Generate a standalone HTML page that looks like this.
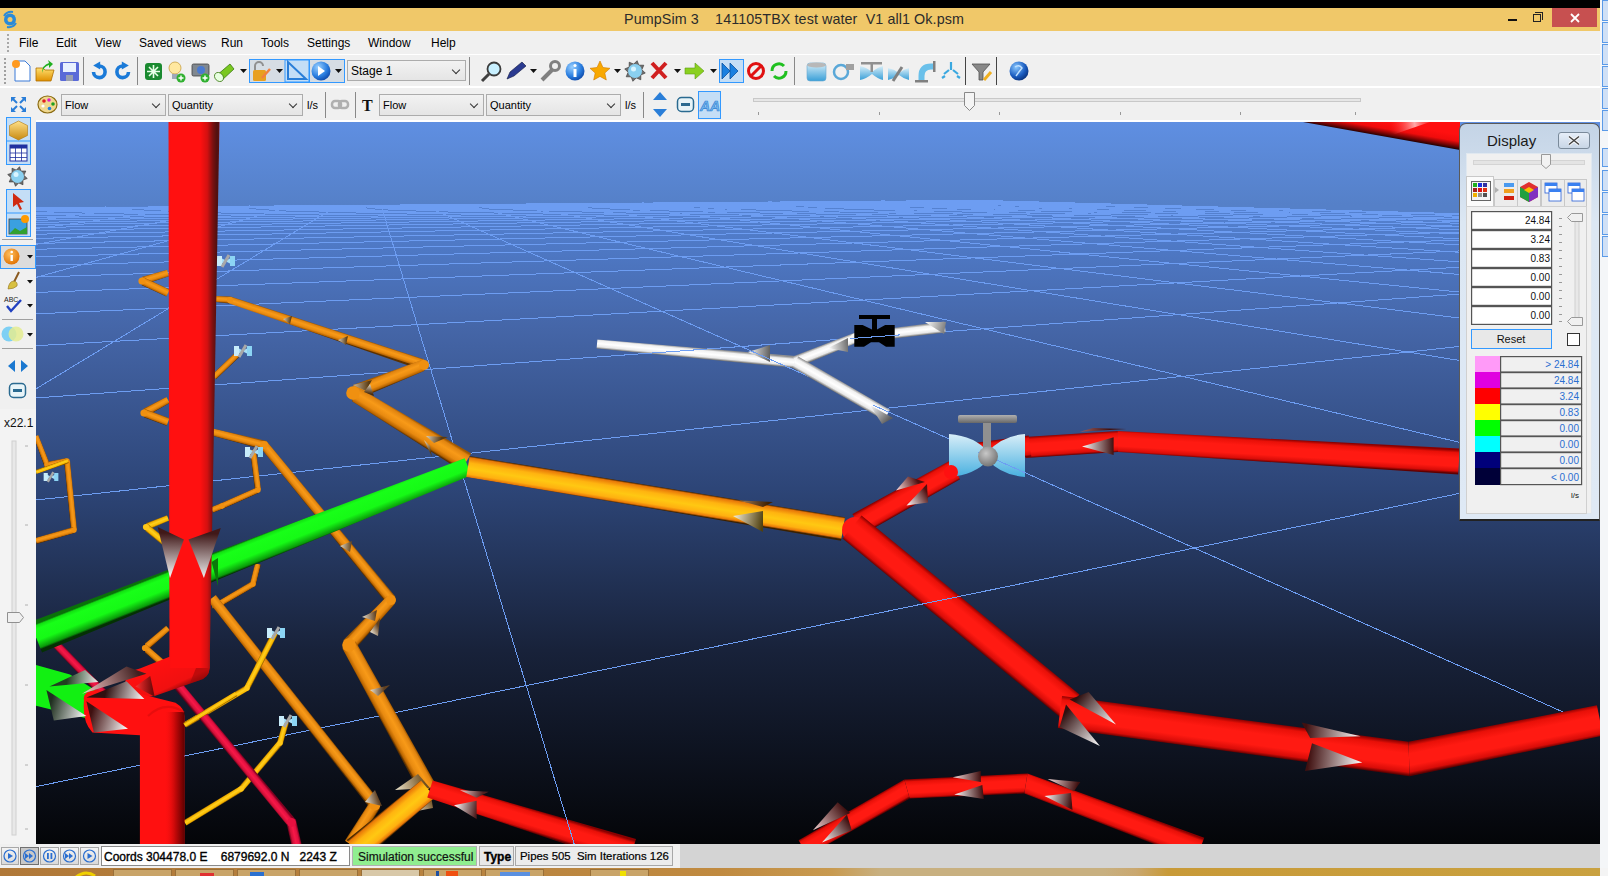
<!DOCTYPE html>
<html><head><meta charset="utf-8">
<style>
*{box-sizing:border-box}
html,body{margin:0;padding:0}
body{width:1608px;height:876px;overflow:hidden;position:relative;background:#f0f0f0;font-family:"Liberation Sans",sans-serif;}
.abs{position:absolute}
#topblack{left:0;top:0;width:1600px;height:8px;background:#000}
#title{left:0;top:8px;width:1600px;height:23px;background:#f0c869}
#title .t{position:absolute;left:624px;top:3px;font-size:14.3px;color:#2b2b2b;white-space:pre;letter-spacing:0.1px}
#menubar{left:0;top:31px;width:1600px;height:23px;background:#f0f0f0}
#menubar span{position:absolute;top:5px;font-size:12px;color:#000}
#tb1{left:0;top:55px;width:1600px;height:31px;background:#f0f0f0}
#tb2{left:0;top:88px;width:1600px;height:33px;background:#f0f0f0}
.wl{background:#fff}
.combo{position:absolute;height:22px;border:1px solid #acacac;background:linear-gradient(#f2f2f2,#e5e5e5);font-size:12px;padding:4px 0 0 3px;color:#000}
.combo:after{content:"";position:absolute;right:6px;top:6px;width:5px;height:5px;border-right:1.5px solid #333;border-bottom:1.5px solid #333;transform:rotate(45deg)}
.sep{position:absolute;width:1px;background:#a0a0a0}
#left{left:0;top:121px;width:36px;height:723px;background:#f0f0f0}
#view{left:0;top:0}
#status{left:0;top:844px;width:1600px;height:24px;background:#d4d4d4}
#task{left:0;top:868px;width:1600px;height:8px;background:linear-gradient(90deg,#b07838 0%,#b98440 30%,#c08a40 45%,#c89a50 52%,#c8b080 55%,#c8b080 69%,#caa870 71%,#c89a38 73%,#c9a140 100%)}
#rstrip{left:1600px;top:8px;width:8px;height:858px;background:#e8eef6}
.sb{position:absolute;top:848px;height:18px;font-size:12px;color:#000;padding:2px 4px 0 4px;white-space:pre;-webkit-text-stroke:0.35px #000}
</style></head><body>
<div class="abs" id="topblack"></div>
<div class="abs" id="title"><span class="t">PumpSim 3    141105TBX test water  V1 all1 Ok.psm</span>
 <div class="abs" style="left:1508px;top:11px;width:9px;height:2px;background:#111"></div>
 <div class="abs" style="left:1533px;top:6px;width:8px;height:8px;border:1.5px solid #222"></div>
 <div class="abs" style="left:1535px;top:4px;width:8px;height:8px;border-top:1.5px solid #222;border-right:1.5px solid #222"></div>
 <div class="abs" style="left:1552px;top:0px;width:45px;height:19px;background:#c75050"></div>
 <svg class="abs" style="left:1570px;top:5px" width="10" height="10"><path d="M1,1L9,9M9,1L1,9" stroke="#fff" stroke-width="1.8"/></svg>
</div>
<div class="abs" id="rstrip"></div>
<div class="abs" id="menubar">
 <div class="abs" style="left:7px;top:3px;width:2px;height:18px;border-left:2px dotted #a8a8a8"></div>
 <span style="left:19px">File</span><span style="left:56px">Edit</span><span style="left:95px">View</span><span style="left:139px">Saved views</span><span style="left:221px">Run</span><span style="left:261px">Tools</span><span style="left:307px">Settings</span><span style="left:368px">Window</span><span style="left:431px">Help</span>
</div>
<div class="abs wl" style="left:0;top:54px;width:1600px;height:1px"></div>
<div class="abs" id="tb1"></div>
<div class="abs wl" style="left:0;top:86px;width:1600px;height:2px"></div>
<div class="abs" id="tb2"></div>
<div class="abs" id="left"></div>
<div class="abs" style="left:36px;top:120px;width:1564px;height:2px;background:#fff"></div>
<svg class="abs" id="view" width="1608" height="876" style="left:0;top:0">
<clipPath id="vclip"><rect x="36" y="122" width="1564" height="722"/></clipPath>
<g clip-path="url(#vclip)">
<defs><linearGradient id="sky" gradientUnits="userSpaceOnUse" x1="0" y1="122" x2="0" y2="205"><stop offset="0" stop-color="#5f8fe2"/><stop offset="1" stop-color="#5580c8"/></linearGradient>
<linearGradient id="gnd" gradientUnits="userSpaceOnUse" x1="0" y1="198" x2="0" y2="844"><stop offset="0" stop-color="#5684d4"/><stop offset="0.08" stop-color="#4e78c4"/><stop offset="0.2" stop-color="#4566a8"/><stop offset="0.45" stop-color="#2d4577"/><stop offset="0.7" stop-color="#18223a"/><stop offset="1" stop-color="#040508"/></linearGradient>
<linearGradient id="rw" gradientUnits="userSpaceOnUse" x1="1402.5" y1="125" x2="1400" y2="139.4"><stop offset="0" stop-color="#ff1010"/><stop offset="0.45" stop-color="#f00c0c"/><stop offset="0.8" stop-color="#700404"/><stop offset="1" stop-color="#200000"/></linearGradient>
<linearGradient id="rwh" gradientUnits="userSpaceOnUse" x1="1390" y1="130" x2="1440" y2="122"><stop offset="0" stop-color="#ff3030" stop-opacity="0"/><stop offset="0.5" stop-color="#ffd0d0" stop-opacity="0.8"/><stop offset="1" stop-color="#ff3030" stop-opacity="0"/></linearGradient>
<linearGradient id="g1" gradientUnits="userSpaceOnUse" x1="696.5" y1="347.8" x2="695.5" y2="358.2"><stop offset="0" stop-color="#909090"/><stop offset="0.2" stop-color="#f0f0f0"/><stop offset="0.5" stop-color="#ffffff"/><stop offset="0.8" stop-color="#e8e8e8"/><stop offset="1" stop-color="#707070"/></linearGradient>
<linearGradient id="g2" gradientUnits="userSpaceOnUse" x1="823.0" y1="344.9" x2="827.0" y2="355.1"><stop offset="0" stop-color="#909090"/><stop offset="0.2" stop-color="#f0f0f0"/><stop offset="0.5" stop-color="#ffffff"/><stop offset="0.8" stop-color="#e8e8e8"/><stop offset="1" stop-color="#707070"/></linearGradient>
<linearGradient id="g3" gradientUnits="userSpaceOnUse" x1="899.4" y1="327.3" x2="900.6" y2="337.7"><stop offset="0" stop-color="#909090"/><stop offset="0.2" stop-color="#f0f0f0"/><stop offset="0.5" stop-color="#ffffff"/><stop offset="0.8" stop-color="#e8e8e8"/><stop offset="1" stop-color="#707070"/></linearGradient>
<linearGradient id="g4" gradientUnits="userSpaceOnUse" x1="844.1" y1="383.1" x2="837.9" y2="393.9"><stop offset="0" stop-color="#909090"/><stop offset="0.2" stop-color="#f0f0f0"/><stop offset="0.5" stop-color="#ffffff"/><stop offset="0.8" stop-color="#e8e8e8"/><stop offset="1" stop-color="#707070"/></linearGradient>
<linearGradient id="c5" gradientUnits="userSpaceOnUse" x1="748" y1="352" x2="770.0" y2="353.5"><stop offset="0" stop-color="#f8f8f8"/><stop offset="1" stop-color="#606060"/></linearGradient>
<linearGradient id="c6" gradientUnits="userSpaceOnUse" x1="828" y1="348" x2="848.0" y2="345.0"><stop offset="0" stop-color="#ffffff"/><stop offset="1" stop-color="#707070"/></linearGradient>
<linearGradient id="c7" gradientUnits="userSpaceOnUse" x1="870" y1="405" x2="887.5" y2="421.0"><stop offset="0" stop-color="#ffffff"/><stop offset="1" stop-color="#606060"/></linearGradient>
<linearGradient id="c8" gradientUnits="userSpaceOnUse" x1="925" y1="322" x2="945.0" y2="328.0"><stop offset="0" stop-color="#ffffff"/><stop offset="1" stop-color="#808080"/></linearGradient>
<linearGradient id="g9" gradientUnits="userSpaceOnUse" x1="153.9" y1="273.4" x2="156.1" y2="280.6"><stop offset="0" stop-color="#a05800"/><stop offset="0.12" stop-color="#e08410"/><stop offset="0.4" stop-color="#f89a18"/><stop offset="0.7" stop-color="#e88a10"/><stop offset="0.9" stop-color="#b86400"/><stop offset="1" stop-color="#5a3000"/></linearGradient>
<linearGradient id="g10" gradientUnits="userSpaceOnUse" x1="156.7" y1="283.4" x2="153.3" y2="290.6"><stop offset="0" stop-color="#a05800"/><stop offset="0.12" stop-color="#e08410"/><stop offset="0.4" stop-color="#f89a18"/><stop offset="0.7" stop-color="#e88a10"/><stop offset="0.9" stop-color="#b86400"/><stop offset="1" stop-color="#5a3000"/></linearGradient>
<linearGradient id="g11" gradientUnits="userSpaceOnUse" x1="223.2" y1="296.3" x2="222.8" y2="302.7"><stop offset="0" stop-color="#a05800"/><stop offset="0.12" stop-color="#e08410"/><stop offset="0.4" stop-color="#f89a18"/><stop offset="0.7" stop-color="#e88a10"/><stop offset="0.9" stop-color="#b86400"/><stop offset="1" stop-color="#5a3000"/></linearGradient>
<linearGradient id="g12" gradientUnits="userSpaceOnUse" x1="328.4" y1="328.2" x2="325.6" y2="336.8"><stop offset="0" stop-color="#a05800"/><stop offset="0.12" stop-color="#e08410"/><stop offset="0.4" stop-color="#f89a18"/><stop offset="0.7" stop-color="#e88a10"/><stop offset="0.9" stop-color="#b86400"/><stop offset="1" stop-color="#5a3000"/></linearGradient>
<linearGradient id="g13" gradientUnits="userSpaceOnUse" x1="386.1" y1="373.0" x2="390.9" y2="385.0"><stop offset="0" stop-color="#a05800"/><stop offset="0.12" stop-color="#e08410"/><stop offset="0.4" stop-color="#f89a18"/><stop offset="0.7" stop-color="#e88a10"/><stop offset="0.9" stop-color="#b86400"/><stop offset="1" stop-color="#5a3000"/></linearGradient>
<linearGradient id="g14" gradientUnits="userSpaceOnUse" x1="414.1" y1="420.0" x2="404.9" y2="435.0"><stop offset="0" stop-color="#a05800"/><stop offset="0.12" stop-color="#e08410"/><stop offset="0.4" stop-color="#f89a18"/><stop offset="0.7" stop-color="#e88a10"/><stop offset="0.9" stop-color="#b86400"/><stop offset="1" stop-color="#5a3000"/></linearGradient>
<linearGradient id="g15" gradientUnits="userSpaceOnUse" x1="223.4" y1="363.8" x2="227.6" y2="368.2"><stop offset="0" stop-color="#a05800"/><stop offset="0.12" stop-color="#e08410"/><stop offset="0.4" stop-color="#f89a18"/><stop offset="0.7" stop-color="#e88a10"/><stop offset="0.9" stop-color="#b86400"/><stop offset="1" stop-color="#5a3000"/></linearGradient>
<linearGradient id="g16" gradientUnits="userSpaceOnUse" x1="239.0" y1="434.6" x2="237.0" y2="442.4"><stop offset="0" stop-color="#a05800"/><stop offset="0.12" stop-color="#e08410"/><stop offset="0.4" stop-color="#f89a18"/><stop offset="0.7" stop-color="#e88a10"/><stop offset="0.9" stop-color="#b86400"/><stop offset="1" stop-color="#5a3000"/></linearGradient>
<linearGradient id="g17" gradientUnits="userSpaceOnUse" x1="331.4" y1="519.3" x2="323.6" y2="525.7"><stop offset="0" stop-color="#a05800"/><stop offset="0.12" stop-color="#e08410"/><stop offset="0.4" stop-color="#f89a18"/><stop offset="0.7" stop-color="#e88a10"/><stop offset="0.9" stop-color="#b86400"/><stop offset="1" stop-color="#5a3000"/></linearGradient>
<linearGradient id="g18" gradientUnits="userSpaceOnUse" x1="365.2" y1="618.1" x2="374.8" y2="626.9"><stop offset="0" stop-color="#a05800"/><stop offset="0.12" stop-color="#e08410"/><stop offset="0.4" stop-color="#f89a18"/><stop offset="0.7" stop-color="#e88a10"/><stop offset="0.9" stop-color="#b86400"/><stop offset="1" stop-color="#5a3000"/></linearGradient>
<linearGradient id="g19" gradientUnits="userSpaceOnUse" x1="395.7" y1="713.0" x2="381.3" y2="721.0"><stop offset="0" stop-color="#a05800"/><stop offset="0.12" stop-color="#e08410"/><stop offset="0.4" stop-color="#f89a18"/><stop offset="0.7" stop-color="#e88a10"/><stop offset="0.9" stop-color="#b86400"/><stop offset="1" stop-color="#5a3000"/></linearGradient>
<linearGradient id="g20" gradientUnits="userSpaceOnUse" x1="258.5" y1="469.6" x2="252.5" y2="470.4"><stop offset="0" stop-color="#a05800"/><stop offset="0.12" stop-color="#e08410"/><stop offset="0.4" stop-color="#f89a18"/><stop offset="0.7" stop-color="#e88a10"/><stop offset="0.9" stop-color="#b86400"/><stop offset="1" stop-color="#5a3000"/></linearGradient>
<linearGradient id="g21" gradientUnits="userSpaceOnUse" x1="238.8" y1="495.3" x2="241.2" y2="500.7"><stop offset="0" stop-color="#a05800"/><stop offset="0.12" stop-color="#e08410"/><stop offset="0.4" stop-color="#f89a18"/><stop offset="0.7" stop-color="#e88a10"/><stop offset="0.9" stop-color="#b86400"/><stop offset="1" stop-color="#5a3000"/></linearGradient>
<linearGradient id="g22" gradientUnits="userSpaceOnUse" x1="215.9" y1="505.2" x2="218.1" y2="510.8"><stop offset="0" stop-color="#a05800"/><stop offset="0.12" stop-color="#e08410"/><stop offset="0.4" stop-color="#f89a18"/><stop offset="0.7" stop-color="#e88a10"/><stop offset="0.9" stop-color="#b86400"/><stop offset="1" stop-color="#5a3000"/></linearGradient>
<linearGradient id="g23" gradientUnits="userSpaceOnUse" x1="252.6" y1="573.3" x2="258.4" y2="574.7"><stop offset="0" stop-color="#a05800"/><stop offset="0.12" stop-color="#e08410"/><stop offset="0.4" stop-color="#f89a18"/><stop offset="0.7" stop-color="#e88a10"/><stop offset="0.9" stop-color="#b86400"/><stop offset="1" stop-color="#5a3000"/></linearGradient>
<linearGradient id="g24" gradientUnits="userSpaceOnUse" x1="235.5" y1="590.9" x2="238.5" y2="596.1"><stop offset="0" stop-color="#a05800"/><stop offset="0.12" stop-color="#e08410"/><stop offset="0.4" stop-color="#f89a18"/><stop offset="0.7" stop-color="#e88a10"/><stop offset="0.9" stop-color="#b86400"/><stop offset="1" stop-color="#5a3000"/></linearGradient>
<linearGradient id="g25" gradientUnits="userSpaceOnUse" x1="215.6" y1="601.7" x2="217.4" y2="607.3"><stop offset="0" stop-color="#a05800"/><stop offset="0.12" stop-color="#e08410"/><stop offset="0.4" stop-color="#f89a18"/><stop offset="0.7" stop-color="#e88a10"/><stop offset="0.9" stop-color="#b86400"/><stop offset="1" stop-color="#5a3000"/></linearGradient>
<linearGradient id="g26" gradientUnits="userSpaceOnUse" x1="297.8" y1="698.1" x2="289.2" y2="704.9"><stop offset="0" stop-color="#a05800"/><stop offset="0.12" stop-color="#e08410"/><stop offset="0.4" stop-color="#f89a18"/><stop offset="0.7" stop-color="#e88a10"/><stop offset="0.9" stop-color="#b86400"/><stop offset="1" stop-color="#5a3000"/></linearGradient>
<linearGradient id="g27" gradientUnits="userSpaceOnUse" x1="357.4" y1="821.3" x2="367.6" y2="827.7"><stop offset="0" stop-color="#a05800"/><stop offset="0.12" stop-color="#e08410"/><stop offset="0.4" stop-color="#f89a18"/><stop offset="0.7" stop-color="#e88a10"/><stop offset="0.9" stop-color="#b86400"/><stop offset="1" stop-color="#5a3000"/></linearGradient>
<linearGradient id="g28" gradientUnits="userSpaceOnUse" x1="154.2" y1="403.2" x2="157.8" y2="409.8"><stop offset="0" stop-color="#a05800"/><stop offset="0.12" stop-color="#e08410"/><stop offset="0.4" stop-color="#f89a18"/><stop offset="0.7" stop-color="#e88a10"/><stop offset="0.9" stop-color="#b86400"/><stop offset="1" stop-color="#5a3000"/></linearGradient>
<linearGradient id="g29" gradientUnits="userSpaceOnUse" x1="157.4" y1="413.8" x2="154.6" y2="421.2"><stop offset="0" stop-color="#a05800"/><stop offset="0.12" stop-color="#e08410"/><stop offset="0.4" stop-color="#f89a18"/><stop offset="0.7" stop-color="#e88a10"/><stop offset="0.9" stop-color="#b86400"/><stop offset="1" stop-color="#5a3000"/></linearGradient>
<linearGradient id="g30" gradientUnits="userSpaceOnUse" x1="155.8" y1="519.5" x2="158.2" y2="525.5"><stop offset="0" stop-color="#a06a00"/><stop offset="0.15" stop-color="#f0b000"/><stop offset="0.45" stop-color="#ffd020"/><stop offset="0.8" stop-color="#f8b800"/><stop offset="1" stop-color="#8a5a00"/></linearGradient>
<linearGradient id="g31" gradientUnits="userSpaceOnUse" x1="159.2" y1="533.3" x2="154.8" y2="538.7"><stop offset="0" stop-color="#a06a00"/><stop offset="0.15" stop-color="#f0b000"/><stop offset="0.45" stop-color="#ffd020"/><stop offset="0.8" stop-color="#f8b800"/><stop offset="1" stop-color="#8a5a00"/></linearGradient>
<linearGradient id="g32" gradientUnits="userSpaceOnUse" x1="154.4" y1="635.5" x2="158.6" y2="640.5"><stop offset="0" stop-color="#a05800"/><stop offset="0.12" stop-color="#e08410"/><stop offset="0.4" stop-color="#f89a18"/><stop offset="0.7" stop-color="#e88a10"/><stop offset="0.9" stop-color="#b86400"/><stop offset="1" stop-color="#5a3000"/></linearGradient>
<linearGradient id="g33" gradientUnits="userSpaceOnUse" x1="158.8" y1="655.4" x2="154.2" y2="660.6"><stop offset="0" stop-color="#a05800"/><stop offset="0.12" stop-color="#e08410"/><stop offset="0.4" stop-color="#f89a18"/><stop offset="0.7" stop-color="#e88a10"/><stop offset="0.9" stop-color="#b86400"/><stop offset="1" stop-color="#5a3000"/></linearGradient>
<linearGradient id="g34" gradientUnits="userSpaceOnUse" x1="44.1" y1="449.5" x2="38.9" y2="451.5"><stop offset="0" stop-color="#a05800"/><stop offset="0.12" stop-color="#e08410"/><stop offset="0.4" stop-color="#f89a18"/><stop offset="0.7" stop-color="#e88a10"/><stop offset="0.9" stop-color="#b86400"/><stop offset="1" stop-color="#5a3000"/></linearGradient>
<linearGradient id="g35" gradientUnits="userSpaceOnUse" x1="56.4" y1="460.1" x2="57.6" y2="465.9"><stop offset="0" stop-color="#a05800"/><stop offset="0.12" stop-color="#e08410"/><stop offset="0.4" stop-color="#f89a18"/><stop offset="0.7" stop-color="#e88a10"/><stop offset="0.9" stop-color="#b86400"/><stop offset="1" stop-color="#5a3000"/></linearGradient>
<linearGradient id="g36" gradientUnits="userSpaceOnUse" x1="73.5" y1="495.2" x2="67.5" y2="495.8"><stop offset="0" stop-color="#a05800"/><stop offset="0.12" stop-color="#e08410"/><stop offset="0.4" stop-color="#f89a18"/><stop offset="0.7" stop-color="#e88a10"/><stop offset="0.9" stop-color="#b86400"/><stop offset="1" stop-color="#5a3000"/></linearGradient>
<linearGradient id="g37" gradientUnits="userSpaceOnUse" x1="54.2" y1="532.6" x2="55.8" y2="538.4"><stop offset="0" stop-color="#a05800"/><stop offset="0.12" stop-color="#e08410"/><stop offset="0.4" stop-color="#f89a18"/><stop offset="0.7" stop-color="#e88a10"/><stop offset="0.9" stop-color="#b86400"/><stop offset="1" stop-color="#5a3000"/></linearGradient>
<linearGradient id="g38" gradientUnits="userSpaceOnUse" x1="51.3" y1="464.6" x2="52.7" y2="468.4"><stop offset="0" stop-color="#a06a00"/><stop offset="0.15" stop-color="#f0b000"/><stop offset="0.45" stop-color="#ffd020"/><stop offset="0.8" stop-color="#f8b800"/><stop offset="1" stop-color="#8a5a00"/></linearGradient>
<linearGradient id="g39" gradientUnits="userSpaceOnUse" x1="214.5" y1="703.9" x2="217.5" y2="709.1"><stop offset="0" stop-color="#a06a00"/><stop offset="0.15" stop-color="#f0b000"/><stop offset="0.45" stop-color="#ffd020"/><stop offset="0.8" stop-color="#f8b800"/><stop offset="1" stop-color="#8a5a00"/></linearGradient>
<linearGradient id="g40" gradientUnits="userSpaceOnUse" x1="258.3" y1="659.1" x2="263.7" y2="661.9"><stop offset="0" stop-color="#a06a00"/><stop offset="0.15" stop-color="#f0b000"/><stop offset="0.45" stop-color="#ffd020"/><stop offset="0.8" stop-color="#f8b800"/><stop offset="1" stop-color="#8a5a00"/></linearGradient>
<linearGradient id="g41" gradientUnits="userSpaceOnUse" x1="211.4" y1="803.4" x2="214.6" y2="808.6"><stop offset="0" stop-color="#a06a00"/><stop offset="0.15" stop-color="#f0b000"/><stop offset="0.45" stop-color="#ffd020"/><stop offset="0.8" stop-color="#f8b800"/><stop offset="1" stop-color="#8a5a00"/></linearGradient>
<linearGradient id="g42" gradientUnits="userSpaceOnUse" x1="258.2" y1="764.1" x2="262.8" y2="767.9"><stop offset="0" stop-color="#a06a00"/><stop offset="0.15" stop-color="#f0b000"/><stop offset="0.45" stop-color="#ffd020"/><stop offset="0.8" stop-color="#f8b800"/><stop offset="1" stop-color="#8a5a00"/></linearGradient>
<linearGradient id="g43" gradientUnits="userSpaceOnUse" x1="280.1" y1="731.7" x2="285.9" y2="733.3"><stop offset="0" stop-color="#a06a00"/><stop offset="0.15" stop-color="#f0b000"/><stop offset="0.45" stop-color="#ffd020"/><stop offset="0.8" stop-color="#f8b800"/><stop offset="1" stop-color="#8a5a00"/></linearGradient>
<linearGradient id="c44" gradientUnits="userSpaceOnUse" x1="283" y1="319" x2="291.0" y2="320.0"><stop offset="0" stop-color="#d8d0c0"/><stop offset="1" stop-color="#5a3a10"/></linearGradient>
<linearGradient id="c45" gradientUnits="userSpaceOnUse" x1="338" y1="340" x2="347.0" y2="340.5"><stop offset="0" stop-color="#d8d0c0"/><stop offset="1" stop-color="#5a3a10"/></linearGradient>
<linearGradient id="c46" gradientUnits="userSpaceOnUse" x1="353" y1="385" x2="369.0" y2="385.5"><stop offset="0" stop-color="#c8b8a0"/><stop offset="1" stop-color="#5a3a10"/></linearGradient>
<linearGradient id="c47" gradientUnits="userSpaceOnUse" x1="370" y1="384" x2="369.0" y2="394.0"><stop offset="0" stop-color="#e0d8c8"/><stop offset="1" stop-color="#4a2a08"/></linearGradient>
<linearGradient id="c48" gradientUnits="userSpaceOnUse" x1="426" y1="436" x2="441.0" y2="440.0"><stop offset="0" stop-color="#d8d0c0"/><stop offset="1" stop-color="#5a3a10"/></linearGradient>
<linearGradient id="c49" gradientUnits="userSpaceOnUse" x1="424" y1="440" x2="431.0" y2="451.5"><stop offset="0" stop-color="#e8e0d0"/><stop offset="1" stop-color="#5a3a10"/></linearGradient>
<linearGradient id="c50" gradientUnits="userSpaceOnUse" x1="340" y1="546" x2="351.0" y2="546.5"><stop offset="0" stop-color="#e0d8c8"/><stop offset="1" stop-color="#6a4a20"/></linearGradient>
<linearGradient id="c51" gradientUnits="userSpaceOnUse" x1="362" y1="617" x2="376.0" y2="615.5"><stop offset="0" stop-color="#e8e0d0"/><stop offset="1" stop-color="#604020"/></linearGradient>
<linearGradient id="c52" gradientUnits="userSpaceOnUse" x1="370" y1="632" x2="379.0" y2="627.0"><stop offset="0" stop-color="#f0e8d8"/><stop offset="1" stop-color="#604020"/></linearGradient>
<linearGradient id="c53" gradientUnits="userSpaceOnUse" x1="370" y1="690" x2="384.0" y2="690.5"><stop offset="0" stop-color="#e8e0d0"/><stop offset="1" stop-color="#604020"/></linearGradient>
<linearGradient id="c54" gradientUnits="userSpaceOnUse" x1="365" y1="802" x2="378.5" y2="798.0"><stop offset="0" stop-color="#e8e0d0"/><stop offset="1" stop-color="#604020"/></linearGradient>
<linearGradient id="c55" gradientUnits="userSpaceOnUse" x1="395" y1="790" x2="424.0" y2="781.0"><stop offset="0" stop-color="#f0e8d0"/><stop offset="1" stop-color="#705020"/></linearGradient>
<linearGradient id="c56" gradientUnits="userSpaceOnUse" x1="412" y1="812" x2="431.5" y2="799.0"><stop offset="0" stop-color="#f8f0e0"/><stop offset="1" stop-color="#705020"/></linearGradient>
<linearGradient id="g57" gradientUnits="userSpaceOnUse" x1="383.8" y1="810.3" x2="399.2" y2="828.7"><stop offset="0" stop-color="#4a2800"/><stop offset="0.07" stop-color="#e87808"/><stop offset="0.3" stop-color="#ffb410"/><stop offset="0.55" stop-color="#ffc812"/><stop offset="0.8" stop-color="#ffb010"/><stop offset="0.93" stop-color="#e87808"/><stop offset="1" stop-color="#3a2000"/></linearGradient>
<linearGradient id="g58" gradientUnits="userSpaceOnUse" x1="79.6" y1="662.5" x2="73.4" y2="668.5"><stop offset="0" stop-color="#800020"/><stop offset="0.2" stop-color="#e01040"/><stop offset="0.5" stop-color="#f81848"/><stop offset="0.8" stop-color="#d01038"/><stop offset="1" stop-color="#600018"/></linearGradient>
<linearGradient id="g59" gradientUnits="userSpaceOnUse" x1="229.4" y1="740.2" x2="222.0" y2="746.2"><stop offset="0" stop-color="#800020"/><stop offset="0.2" stop-color="#e01040"/><stop offset="0.5" stop-color="#f81848"/><stop offset="0.8" stop-color="#d01038"/><stop offset="1" stop-color="#600018"/></linearGradient>
<linearGradient id="g60" gradientUnits="userSpaceOnUse" x1="299.4" y1="835.1" x2="289.7" y2="837.3"><stop offset="0" stop-color="#800020"/><stop offset="0.2" stop-color="#e01040"/><stop offset="0.5" stop-color="#f81848"/><stop offset="0.8" stop-color="#d01038"/><stop offset="1" stop-color="#600018"/></linearGradient>
<linearGradient id="g61" gradientUnits="userSpaceOnUse" x1="247.3" y1="540.1" x2="256.7" y2="563.8"><stop offset="0" stop-color="#0a700a"/><stop offset="0.06" stop-color="#12e012"/><stop offset="0.2" stop-color="#18ff18"/><stop offset="0.62" stop-color="#16fa16"/><stop offset="0.78" stop-color="#10c810"/><stop offset="0.92" stop-color="#0a9a0a"/><stop offset="1" stop-color="#043004"/></linearGradient>
<linearGradient id="g62" gradientUnits="userSpaceOnUse" x1="657.3" y1="486.7" x2="653.7" y2="508.8"><stop offset="0" stop-color="#4a2800"/><stop offset="0.07" stop-color="#e87808"/><stop offset="0.3" stop-color="#ffb410"/><stop offset="0.55" stop-color="#ffc812"/><stop offset="0.8" stop-color="#ffb010"/><stop offset="0.93" stop-color="#e87808"/><stop offset="1" stop-color="#3a2000"/></linearGradient>
<linearGradient id="c63" gradientUnits="userSpaceOnUse" x1="733" y1="516" x2="763.0" y2="521.5"><stop offset="0" stop-color="#f8f0d8"/><stop offset="1" stop-color="#504010"/></linearGradient>
<linearGradient id="c64" gradientUnits="userSpaceOnUse" x1="739" y1="500.5" x2="768.0" y2="504.5"><stop offset="0" stop-color="#a08060"/><stop offset="1" stop-color="#402000"/></linearGradient>
<linearGradient id="g65" gradientUnits="userSpaceOnUse" x1="901.1" y1="487.4" x2="911.9" y2="506.6"><stop offset="0" stop-color="#8a0000"/><stop offset="0.12" stop-color="#e81008"/><stop offset="0.35" stop-color="#ff1a12"/><stop offset="0.7" stop-color="#ff1a12"/><stop offset="0.9" stop-color="#d80c08"/><stop offset="1" stop-color="#600000"/></linearGradient>
<linearGradient id="g66" gradientUnits="userSpaceOnUse" x1="1070.8" y1="434.0" x2="1072.2" y2="455.0"><stop offset="0" stop-color="#8a0000"/><stop offset="0.12" stop-color="#e81008"/><stop offset="0.35" stop-color="#ff1a12"/><stop offset="0.7" stop-color="#ff1a12"/><stop offset="0.9" stop-color="#d80c08"/><stop offset="1" stop-color="#600000"/></linearGradient>
<linearGradient id="g67" gradientUnits="userSpaceOnUse" x1="1289.2" y1="439.8" x2="1287.8" y2="463.2"><stop offset="0" stop-color="#8a0000"/><stop offset="0.12" stop-color="#e81008"/><stop offset="0.35" stop-color="#ff1a12"/><stop offset="0.7" stop-color="#ff1a12"/><stop offset="0.9" stop-color="#d80c08"/><stop offset="1" stop-color="#600000"/></linearGradient>
<linearGradient id="c68" gradientUnits="userSpaceOnUse" x1="896" y1="490.5" x2="916.5" y2="479.25"><stop offset="0" stop-color="#ffe0e0"/><stop offset="1" stop-color="#501010"/></linearGradient>
<linearGradient id="c69" gradientUnits="userSpaceOnUse" x1="906.5" y1="505.4" x2="927.5" y2="493.3"><stop offset="0" stop-color="#ffffff"/><stop offset="1" stop-color="#501010"/></linearGradient>
<linearGradient id="c70" gradientUnits="userSpaceOnUse" x1="1080" y1="431.7" x2="1109.8" y2="428.5"><stop offset="0" stop-color="#a06060"/><stop offset="1" stop-color="#401010"/></linearGradient>
<linearGradient id="c71" gradientUnits="userSpaceOnUse" x1="1082" y1="446.6" x2="1113.6" y2="446.15"><stop offset="0" stop-color="#ffffff"/><stop offset="1" stop-color="#401010"/></linearGradient>
<linearGradient id="g72" gradientUnits="userSpaceOnUse" x1="970.5" y1="604.9" x2="951.5" y2="628.1"><stop offset="0" stop-color="#8a0000"/><stop offset="0.12" stop-color="#e81008"/><stop offset="0.35" stop-color="#ff1a12"/><stop offset="0.7" stop-color="#ff1a12"/><stop offset="0.9" stop-color="#d80c08"/><stop offset="1" stop-color="#600000"/></linearGradient>
<linearGradient id="g73" gradientUnits="userSpaceOnUse" x1="1236.7" y1="719.1" x2="1232.3" y2="751.9"><stop offset="0" stop-color="#8a0000"/><stop offset="0.12" stop-color="#e81008"/><stop offset="0.35" stop-color="#ff1a12"/><stop offset="0.7" stop-color="#ff1a12"/><stop offset="0.9" stop-color="#d80c08"/><stop offset="1" stop-color="#600000"/></linearGradient>
<linearGradient id="g74" gradientUnits="userSpaceOnUse" x1="1501.3" y1="723.8" x2="1507.7" y2="755.7"><stop offset="0" stop-color="#8a0000"/><stop offset="0.12" stop-color="#e81008"/><stop offset="0.35" stop-color="#ff1a12"/><stop offset="0.7" stop-color="#ff1a12"/><stop offset="0.9" stop-color="#d80c08"/><stop offset="1" stop-color="#600000"/></linearGradient>
<linearGradient id="c75" gradientUnits="userSpaceOnUse" x1="1116" y1="724.5" x2="1079.15" y2="695.65"><stop offset="0" stop-color="#ffffff"/><stop offset="1" stop-color="#301010"/></linearGradient>
<linearGradient id="c76" gradientUnits="userSpaceOnUse" x1="1099.9" y1="745.9" x2="1062.85" y2="715.7"><stop offset="0" stop-color="#ffffff"/><stop offset="1" stop-color="#301010"/></linearGradient>
<linearGradient id="c77" gradientUnits="userSpaceOnUse" x1="1360.6" y1="736.3" x2="1305.9" y2="730.25"><stop offset="0" stop-color="#ffffff"/><stop offset="1" stop-color="#401010"/></linearGradient>
<linearGradient id="c78" gradientUnits="userSpaceOnUse" x1="1362.3" y1="762.4" x2="1308.5" y2="757.15"><stop offset="0" stop-color="#ffffff"/><stop offset="1" stop-color="#401010"/></linearGradient>
<linearGradient id="g79" gradientUnits="userSpaceOnUse" x1="850.4" y1="810.5" x2="859.6" y2="826.5"><stop offset="0" stop-color="#8a0000"/><stop offset="0.12" stop-color="#e81008"/><stop offset="0.35" stop-color="#ff1a12"/><stop offset="0.7" stop-color="#ff1a12"/><stop offset="0.9" stop-color="#d80c08"/><stop offset="1" stop-color="#600000"/></linearGradient>
<linearGradient id="g80" gradientUnits="userSpaceOnUse" x1="966.0" y1="776.5" x2="967.0" y2="796.0"><stop offset="0" stop-color="#8a0000"/><stop offset="0.12" stop-color="#e81008"/><stop offset="0.35" stop-color="#ff1a12"/><stop offset="0.7" stop-color="#ff1a12"/><stop offset="0.9" stop-color="#d80c08"/><stop offset="1" stop-color="#600000"/></linearGradient>
<linearGradient id="g81" gradientUnits="userSpaceOnUse" x1="1116.9" y1="806.0" x2="1109.1" y2="826.5"><stop offset="0" stop-color="#8a0000"/><stop offset="0.12" stop-color="#e81008"/><stop offset="0.35" stop-color="#ff1a12"/><stop offset="0.7" stop-color="#ff1a12"/><stop offset="0.9" stop-color="#d80c08"/><stop offset="1" stop-color="#600000"/></linearGradient>
<linearGradient id="c82" gradientUnits="userSpaceOnUse" x1="952.8" y1="777.3" x2="980.8" y2="776.55"><stop offset="0" stop-color="#f8e0e0"/><stop offset="1" stop-color="#401010"/></linearGradient>
<linearGradient id="c83" gradientUnits="userSpaceOnUse" x1="954.3" y1="794.4" x2="983.0999999999999" y2="792.0"><stop offset="0" stop-color="#ffffff"/><stop offset="1" stop-color="#401010"/></linearGradient>
<linearGradient id="c84" gradientUnits="userSpaceOnUse" x1="1047.6" y1="778.9" x2="1077.15" y2="786.65"><stop offset="0" stop-color="#f8e0e0"/><stop offset="1" stop-color="#401010"/></linearGradient>
<linearGradient id="c85" gradientUnits="userSpaceOnUse" x1="1044.5" y1="796" x2="1071.75" y2="801.45"><stop offset="0" stop-color="#ffffff"/><stop offset="1" stop-color="#401010"/></linearGradient>
<linearGradient id="c86" gradientUnits="userSpaceOnUse" x1="812.9" y1="830.2" x2="843.95" y2="807.6"><stop offset="0" stop-color="#f0d0d0"/><stop offset="1" stop-color="#401010"/></linearGradient>
<linearGradient id="c87" gradientUnits="userSpaceOnUse" x1="822" y1="842.6" x2="849.35" y2="822.4000000000001"><stop offset="0" stop-color="#ffffff"/><stop offset="1" stop-color="#401010"/></linearGradient>
<linearGradient id="g88" gradientUnits="userSpaceOnUse" x1="534.3" y1="809.8" x2="527.7" y2="831.2"><stop offset="0" stop-color="#8a0000"/><stop offset="0.12" stop-color="#e81008"/><stop offset="0.35" stop-color="#ff1a12"/><stop offset="0.7" stop-color="#ff1a12"/><stop offset="0.9" stop-color="#d80c08"/><stop offset="1" stop-color="#600000"/></linearGradient>
<linearGradient id="c89" gradientUnits="userSpaceOnUse" x1="460" y1="790.2" x2="482.65" y2="794.75"><stop offset="0" stop-color="#f0d0d0"/><stop offset="1" stop-color="#502020"/></linearGradient>
<linearGradient id="c90" gradientUnits="userSpaceOnUse" x1="454" y1="805.3" x2="476.6" y2="809.9"><stop offset="0" stop-color="#ffffff"/><stop offset="1" stop-color="#502020"/></linearGradient>
<linearGradient id="rv" x1="0" y1="0" x2="1" y2="0"><stop offset="0" stop-color="#f81010"/><stop offset="0.05" stop-color="#ff1010"/><stop offset="0.62" stop-color="#ff1010"/><stop offset="0.76" stop-color="#d41010"/><stop offset="0.87" stop-color="#7a1010"/><stop offset="0.95" stop-color="#501010"/><stop offset="0.98" stop-color="#581010"/><stop offset="1" stop-color="#a01010"/></linearGradient>
<linearGradient id="elb" gradientUnits="userSpaceOnUse" x1="160" y1="660" x2="175" y2="692"><stop offset="0" stop-color="#ff1010"/><stop offset="0.8" stop-color="#f01010"/><stop offset="1" stop-color="#900808"/></linearGradient>
<linearGradient id="c91" gradientUnits="userSpaceOnUse" x1="170" y1="577.9" x2="170.8" y2="533.2"><stop offset="0" stop-color="#ffffff"/><stop offset="1" stop-color="#401818"/></linearGradient>
<linearGradient id="c92" gradientUnits="userSpaceOnUse" x1="203.9" y1="577.9" x2="204.65" y2="533.7"><stop offset="0" stop-color="#f0f0f0"/><stop offset="1" stop-color="#401818"/></linearGradient>
<linearGradient id="rv2" x1="0" y1="0" x2="1" y2="0"><stop offset="0" stop-color="#ff1010" stop-opacity="0"/><stop offset="0.55" stop-color="#ff1010" stop-opacity="0"/><stop offset="0.8" stop-color="#c00808"/><stop offset="1" stop-color="#600000"/></linearGradient>
<linearGradient id="c93" gradientUnits="userSpaceOnUse" x1="98.3" y1="682" x2="67.2" y2="678.2"><stop offset="0" stop-color="#f0f0f0"/><stop offset="1" stop-color="#204020"/></linearGradient>
<linearGradient id="c94" gradientUnits="userSpaceOnUse" x1="86.4" y1="716" x2="50.099999999999994" y2="705.25"><stop offset="0" stop-color="#ffffff"/><stop offset="1" stop-color="#203020"/></linearGradient>
<linearGradient id="c95" gradientUnits="userSpaceOnUse" x1="82" y1="693.8" x2="136.5" y2="670.0999999999999"><stop offset="0" stop-color="#f8c8c8"/><stop offset="1" stop-color="#402020"/></linearGradient>
<linearGradient id="c96" gradientUnits="userSpaceOnUse" x1="144.3" y1="699" x2="106.45" y2="689.35"><stop offset="0" stop-color="#ffffff"/><stop offset="1" stop-color="#301010"/></linearGradient>
<linearGradient id="c97" gradientUnits="userSpaceOnUse" x1="128" y1="728.7" x2="90.15" y2="716.8"><stop offset="0" stop-color="#ffffff"/><stop offset="1" stop-color="#401010"/></linearGradient>
<linearGradient id="c98" gradientUnits="userSpaceOnUse" x1="135.4" y1="686.4" x2="152.45" y2="686.4"><stop offset="0" stop-color="#ff3030"/><stop offset="1" stop-color="#700a0a"/></linearGradient>
<linearGradient id="g99" gradientUnits="userSpaceOnUse" x1="208.9" y1="707.4" x2="211.5" y2="711.6"><stop offset="0" stop-color="#a06a00"/><stop offset="0.15" stop-color="#f0b000"/><stop offset="0.45" stop-color="#ffd020"/><stop offset="0.8" stop-color="#f8b800"/><stop offset="1" stop-color="#8a5a00"/></linearGradient>
<linearGradient id="vb" x1="0" y1="0" x2="0" y2="1"><stop offset="0" stop-color="#d8eef8"/><stop offset="1" stop-color="#48b0e0"/></linearGradient>
<radialGradient id="vball" cx="0.4" cy="0.35" r="0.7"><stop offset="0" stop-color="#c8c8c8"/><stop offset="1" stop-color="#707070"/></radialGradient>
<linearGradient id="vh" x1="0" y1="0" x2="0" y2="1"><stop offset="0" stop-color="#b0b0b0"/><stop offset="1" stop-color="#686868"/></linearGradient>
<linearGradient id="g100" gradientUnits="userSpaceOnUse" x1="997.7" y1="439.8" x2="1000.3" y2="460.2"><stop offset="0" stop-color="#8a0000"/><stop offset="0.12" stop-color="#e81008"/><stop offset="0.35" stop-color="#ff1a12"/><stop offset="0.7" stop-color="#ff1a12"/><stop offset="0.9" stop-color="#d80c08"/><stop offset="1" stop-color="#600000"/></linearGradient></defs>
<rect x="36" y="122" width="1564" height="722" fill="url(#sky)"/>
<polygon points="-4252.8,240.7 -4158.6,240.0 -4066.8,239.3 -3977.4,238.6 -3890.2,237.9 -3805.2,237.2 -3722.2,236.6 -3641.3,236.0 -3562.3,235.4 -3485.1,234.8 -3409.8,234.2 -3336.2,233.6 -3264.3,233.1 -3194.0,232.5 -3125.3,232.0 -3058.1,231.5 -2992.4,230.9 -2928.1,230.4 -2865.2,230.0 -2803.6,229.5 -2743.3,229.0 -2684.2,228.6 -2626.4,228.1 -2569.7,227.7 -2514.2,227.2 -2459.7,226.8 -2406.4,226.4 -2354.1,226.0 -2302.8,225.6 -2252.4,225.2 -2203.1,224.8 -2154.6,224.4 -2107.1,224.1 -2060.4,223.7 -2014.6,223.4 -1969.6,223.0 -1925.4,222.7 -1882.0,222.3 -1839.4,222.0 -1797.5,221.7 -1756.4,221.4 -1715.9,221.0 -1676.2,220.7 -1637.1,220.4 -1598.6,220.1 -1560.8,219.8 -1523.6,219.6 -1487.1,219.3 -1451.1,219.0 -1415.7,218.7 -1380.8,218.4 -1346.6,218.2 -1312.8,217.9 -1279.6,217.7 -1246.9,217.4 -1214.7,217.2 -1182.9,216.9 -1151.7,216.7 -1120.9,216.4 -1090.6,216.2 -1060.7,216.0 -1031.3,215.7 -1002.3,215.5 -973.7,215.3 -945.5,215.1 -917.8,214.9 -890.4,214.6 -863.4,214.4 -836.8,214.2 -810.5,214.0 -784.6,213.8 -759.1,213.6 -733.9,213.4 -709.0,213.2 -684.5,213.0 -660.3,212.9 -636.4,212.7 -612.9,212.5 -589.6,212.3 -566.7,212.1 -544.0,212.0 -521.6,211.8 -499.5,211.6 -477.7,211.4 -456.2,211.3 -434.9,211.1 -413.9,210.9 -393.2,210.8 -372.7,210.6 -352.5,210.5 -332.5,210.3 -312.7,210.2 -293.2,210.0 -273.9,209.9 -254.8,209.7 -236.0,209.6 -217.4,209.4 -199.0,209.3 -180.8,209.1 -162.8,209.0 -145.0,208.9 -127.4,208.7 -110.1,208.6 -92.9,208.5 -75.9,208.3 -59.1,208.2 -42.5,208.1 -26.0,207.9 -9.8,207.8 6.3,207.7 22.2,207.6 37.9,207.4 53.5,207.3 68.9,207.2 84.2,207.1 99.2,207.0 114.2,206.9 128.9,206.7 143.6,206.6 158.0,206.5 172.3,206.4 186.5,206.3 200.5,206.2 214.4,206.1 228.2,206.0 241.8,205.9 255.3,205.8 268.6,205.7 281.8,205.6 294.9,205.5 307.9,205.3 320.7,205.3 333.4,205.2 346.0,205.1 358.4,205.0 370.8,204.9 383.0,204.8 395.1,204.7 407.1,204.6 419.0,204.5 430.8,204.4 442.5,204.3 454.0,204.2 465.5,204.1 476.8,204.0 488.1,204.0 499.2,203.9 510.3,203.8 521.2,203.7 532.1,203.6 542.8,203.5 553.5,203.4 564.1,203.4 574.5,203.3 584.9,203.2 595.2,203.1 605.4,203.0 615.5,203.0 625.6,202.9 635.5,202.8 645.4,202.7 655.1,202.7 664.8,202.6 674.4,202.5 684.0,202.4 693.4,202.4 702.8,202.3 712.1,202.2 721.3,202.1 730.5,202.1 739.5,202.0 748.5,201.9 757.5,201.9 766.3,201.8 775.1,201.7 783.8,201.7 792.5,201.6 801.0,201.5 809.5,201.5 818.0,201.4 826.3,201.3 834.7,201.3 842.9,201.2 851.1,201.1 859.2,201.1 867.2,201.0 875.2,200.9 883.2,200.9 891.0,200.8 898.9,200.8 906.6,200.7 914.3,200.6 921.9,200.6 929.5,200.5 937.0,200.5 944.5,200.4 951.9,200.4 959.3,200.3 966.6,200.2 973.8,200.2 973.8,200.2 976.5,200.3 979.2,200.3 981.9,200.4 984.6,200.5 987.3,200.6 990.1,200.6 992.9,200.7 995.7,200.8 998.6,200.9 1001.5,201.0 1004.4,201.0 1007.3,201.1 1010.2,201.2 1013.2,201.3 1016.2,201.4 1019.3,201.5 1022.3,201.5 1025.4,201.6 1028.6,201.7 1031.7,201.8 1034.9,201.9 1038.1,202.0 1041.4,202.1 1044.7,202.2 1048.0,202.3 1051.3,202.3 1054.7,202.4 1058.1,202.5 1061.6,202.6 1065.1,202.7 1068.6,202.8 1072.2,202.9 1075.7,203.0 1079.4,203.1 1083.0,203.2 1086.8,203.3 1090.5,203.4 1094.3,203.5 1098.1,203.6 1102.0,203.8 1105.9,203.9 1109.8,204.0 1113.8,204.1 1117.9,204.2 1122.0,204.3 1126.1,204.4 1130.3,204.5 1134.5,204.7 1138.7,204.8 1143.1,204.9 1147.4,205.0 1151.8,205.1 1156.3,205.3 1160.8,205.4 1165.4,205.5 1170.0,205.6 1174.7,205.8 1179.4,205.9 1184.2,206.0 1189.1,206.2 1194.0,206.3 1198.9,206.5 1204.0,206.6 1209.0,206.7 1214.2,206.9 1219.4,207.0 1224.7,207.2 1230.0,207.3 1235.4,207.5 1240.9,207.6 1246.5,207.8 1252.1,207.9 1257.8,208.1 1263.6,208.3 1269.4,208.4 1275.3,208.6 1281.3,208.8 1287.4,208.9 1293.6,209.1 1299.8,209.3 1306.2,209.4 1312.6,209.6 1319.1,209.8 1325.7,210.0 1332.4,210.2 1339.2,210.4 1346.1,210.6 1353.0,210.7 1360.1,210.9 1367.3,211.1 1374.6,211.4 1382.0,211.6 1389.5,211.8 1397.2,212.0 1404.9,212.2 1412.8,212.4 1420.7,212.6 1428.9,212.9 1437.1,213.1 1445.4,213.3 1453.9,213.6 1462.6,213.8 1471.3,214.0 1480.3,214.3 1489.3,214.5 1498.5,214.8 1507.9,215.1 1517.4,215.3 1527.1,215.6 1536.9,215.9 1546.9,216.2 1557.1,216.4 1567.5,216.7 1578.0,217.0 1588.8,217.3 1599.7,217.6 1610.8,217.9 1622.2,218.2 1633.7,218.6 1645.5,218.9 1657.5,219.2 1669.7,219.6 1682.1,219.9 1694.8,220.3 1707.7,220.6 1720.9,221.0 1734.4,221.4 1748.1,221.8 1762.1,222.1 1776.4,222.5 1791.0,223.0 1805.9,223.4 1821.1,223.8 1836.6,224.2 1852.5,224.7 1868.8,225.1 1885.3,225.6 1902.3,226.1 1919.7,226.5 1937.4,227.0 1955.6,227.5 1974.1,228.1 1993.2,228.6 2012.7,229.1 2032.6,229.7 2053.1,230.3 2074.0,230.8 2095.5,231.4 2117.6,232.0 2140.2,232.7 2163.4,233.3 2187.2,234.0 2211.7,234.7 2236.8,235.4 2262.7,236.1 2289.2,236.8 2316.6,237.6 2344.7,238.4 2373.6,239.2 2403.4,240.0 2434.1,240.9 2465.8,241.8 2498.4,242.7 2532.1,243.6 2566.9,244.6 2602.8,245.6 2639.8,246.6 2678.2,247.7 2717.9,248.8 2758.9,249.9 2801.4,251.1 2845.5,252.3 2891.2,253.6 2938.6,254.9 2987.9,256.3 3039.0,257.7 3092.3,259.2 3147.6,260.7 3205.3,262.4 3265.5,264.0 3328.2,265.8 3393.8,267.6 3462.3,269.5 3533.9,271.5 3609.0,273.6 3687.8,275.8 3770.5,278.1 3857.4,280.5 3948.9,283.1 4045.3,285.8 4147.1,288.6 4254.6,291.6 4368.5,294.8 4489.3,298.1 4617.6,301.7 4754.2,305.5 4899.8,309.6 5055.5,313.9 5222.2,318.5 1600.0,5000.0 -5000.0,5000.0" fill="url(#gnd)"/>
<path d="M-4499.3 243.8L982.3 200.4M-5080.3 251.0L999.9 200.9M-5818.5 260.1L1018.6 201.4M-6787.9 272.1L1038.5 202.0M-8117.0 288.5L1059.6 202.6M-10051.7 312.4L1082.1 203.2M-13128.3 350.5L1106.1 203.9M-18780.5 420.4L1131.9 204.6M-32571.6 591.0L1159.5 205.4M-117277.6 1638.6L1189.1 206.2M-674637.0 8877.0L1221.2 207.1M-635022.2 8897.1L1255.8 208.0M-595407.3 8917.2L1293.4 209.1M-555792.4 8937.3L1334.3 210.2M-516177.5 8957.4L1379.1 211.5M-476562.6 8977.5L1428.2 212.8M-436947.8 8997.6L1482.4 214.4M-397332.9 9017.7L1542.5 216.0M-357718.0 9037.8L1609.4 217.9M-318103.1 9057.9L1684.5 220.0M-278488.3 9078.0L1769.3 222.3M-238873.4 9098.1L1865.9 225.0M-199258.5 9118.2L1976.8 228.1M-159643.6 9138.2L2105.6 231.7M-120028.7 9158.3L2256.9 235.9M-80413.9 9178.4L2437.1 241.0M-40799.0 9198.5L2655.5 247.0M-1184.1 9218.6L2925.7 254.6M38430.8 9238.7L3268.4 264.1M78045.6 9258.8L3717.5 276.6M117660.5 9278.9L4331.7 293.7M157275.4 9299.0L5222.2 318.5M-4252.8 240.7L-701426.9 8863.4M-3942.6 238.3L-683813.6 8872.4M-3658.0 236.1L-666200.3 8881.3M-3395.9 234.1L-648587.0 8890.2M-3153.8 232.2L-630973.7 8899.2M-2929.4 230.5L-613360.4 8908.1M-2721.0 228.8L-595747.1 8917.0M-2526.8 227.3L-578133.8 8926.0M-2345.4 225.9L-560520.5 8934.9M-2175.7 224.6L-542907.2 8943.8M-2016.5 223.4L-525293.9 8952.8M-1866.8 222.2L-507680.6 8961.7M-1725.9 221.1L-490067.3 8970.6M-1593.0 220.1L-472454.0 8979.6M-1467.5 219.1L-454840.7 8988.5M-1348.6 218.2L-437227.4 8997.5M-1236.0 217.3L-419614.1 9006.4M-1129.2 216.5L-402000.8 9015.3M-1027.6 215.7L-384387.5 9024.3M-931.0 215.0L-366774.2 9033.2M-838.9 214.2L-349160.9 9042.1M-751.1 213.6L-331547.6 9051.1M-667.3 212.9L-313934.3 9060.0M-587.2 212.3L-296321.0 9068.9M-510.5 211.7L-278707.7 9077.9M-437.1 211.1L-261094.4 9086.8M-366.7 210.6L-243481.1 9095.7M-299.2 210.1L-225867.8 9104.7M-234.4 209.6L-208254.5 9113.6M-172.1 209.1L-190641.2 9122.5M-112.2 208.6L-173027.9 9131.5M-54.5 208.2L-155414.6 9140.4M1.0 207.7L-137801.3 9149.3M54.5 207.3L-120188.1 9158.3M106.1 206.9L-102574.8 9167.2M156.0 206.5L-84961.5 9176.1M204.1 206.2L-67348.2 9185.1M250.5 205.8L-49734.9 9194.0M295.5 205.4L-32121.6 9202.9M338.9 205.1L-14508.3 9211.9M381.0 204.8L3105.0 9220.8M421.8 204.5L20718.3 9229.7M461.2 204.2L38331.6 9238.7M499.5 203.9L55944.9 9247.6M536.6 203.6L73558.2 9256.5M572.6 203.3L91171.5 9265.5M607.6 203.0L108784.8 9274.4M641.5 202.8L126398.1 9283.3M674.5 202.5L144011.4 9292.3M706.5 202.3L60457.7 3580.8M737.7 202.0L19197.2 1143.9M768.0 201.8L12412.6 743.2M797.5 201.6L9626.5 578.7M826.2 201.3L8108.6 489.0M854.2 201.1L7153.6 432.6M881.4 200.9L6497.3 393.9M907.9 200.7L6018.6 365.6M933.8 200.5L5653.9 344.0M959.0 200.3L5366.9 327.1M973.8 200.2L5222.2 318.5" stroke="#6d9df2" stroke-width="1" fill="none" shape-rendering="crispEdges"/>
<polygon points="1303,122 1460,122 1460,150" fill="url(#rw)"/>
<polygon points="1386,122 1430,122 1395,134 1385,131" fill="url(#rwh)"/>
<polygon points="597.4,339.5 795.5,356.0 794.5,368.0 596.6,348.5" fill="url(#g1)"/>
<polygon points="792.8,356.4 853.8,333.1 856.3,342.9 797.2,367.6" fill="url(#g2)"/>
<polygon points="853.8,333.1 944.3,321.5 945.7,332.5 856.3,342.9" fill="url(#g3)"/>
<circle cx="855.0" cy="338.0" r="4.5" fill="#f4f4f4"/>
<polygon points="798.2,356.4 890.0,409.8 884.0,420.2 791.8,367.6" fill="url(#g4)"/>
<polygon points="748.0,352.0 770.0,345.0 770.0,362.0" fill="url(#c5)"/>
<polygon points="828.0,348.0 848.0,338.0 848.0,352.0" fill="url(#c6)"/>
<polygon points="870.0,405.0 893.0,418.0 882.0,424.0" fill="url(#c7)"/>
<polygon points="925.0,322.0 946.0,322.0 944.0,334.0" fill="url(#c8)"/>
<path d="M640,353.9L790,343.0M726.6,340L805.3,375M872.7,405L917.7,425" stroke="#6d9df2" stroke-width="1" fill="none" shape-rendering="crispEdges"/>
<g fill="#000"><rect x="859" y="315" width="31" height="4"/><rect x="872" y="318" width="5" height="12"/><path d="M854.3,325 L862.6,325 L872,329.6 L877,329.6 L885.2,325 L894.7,325 L894.7,346.7 L886,346.7 L879,342.2 L871,342.2 L864,346.7 L854.3,346.7 Z"/></g>
<path d="M850,338.6L900,334.9" stroke="#6d9df2" stroke-width="1" fill="none" shape-rendering="crispEdges"/>
<polygon points="167.0,269.7 142.3,276.7 141.8,285.3 169.0,276.3" fill="url(#g9)"/>
<polygon points="142.3,276.7 169.7,289.4 166.3,296.6 141.8,285.3" fill="url(#g10)"/>
<circle cx="142.0" cy="281.0" r="3.6" fill="#f09010"/>
<polygon points="216.2,296.0 230.6,296.5 229.2,303.4 215.8,302.0" fill="url(#g11)"/>
<polygon points="230.6,296.5 423.9,359.2 424.2,370.9 229.2,303.4" fill="url(#g12)"/>
<polygon points="423.9,359.2 353.7,384.7 352.3,401.4 424.2,370.9" fill="url(#g13)"/>
<polygon points="353.7,384.7 471.2,453.5 460.8,470.5 352.3,401.4" fill="url(#g14)"/>
<circle cx="230.0" cy="300.0" r="3.1" fill="#f09010"/>
<circle cx="424.0" cy="365.0" r="5.0" fill="#f09010"/>
<circle cx="353.0" cy="393.0" r="6.8" fill="#f09010"/>
<polygon points="211.9,374.8 234.9,352.8 239.1,357.2 216.1,379.2" fill="url(#g15)"/>
<g transform="translate(226,261) scale(1.0)"><path d="M-9,-5 L-1,-1 L-1,1 L-9,5Z M9,-5 L1,-1 L1,1 L9,5Z" fill="#a8e0f8"/><rect x="-9" y="-5" width="5" height="10" fill="#c8ecfa"/><rect x="4" y="-5" width="5" height="10" fill="#8cd4f4"/><path d="M-4,6 L3,-6" stroke="#a8a8a8" stroke-width="3"/></g>
<g transform="translate(243,351) scale(1.0)"><path d="M-9,-5 L-1,-1 L-1,1 L-9,5Z M9,-5 L1,-1 L1,1 L9,5Z" fill="#a8e0f8"/><rect x="-9" y="-5" width="5" height="10" fill="#c8ecfa"/><rect x="4" y="-5" width="5" height="10" fill="#8cd4f4"/><path d="M-4,6 L3,-6" stroke="#a8a8a8" stroke-width="3"/></g>
<polygon points="212.8,428.6 266.5,441.0 261.4,449.0 211.2,435.4" fill="url(#g16)"/>
<polygon points="266.5,441.0 395.3,596.5 386.7,603.5 261.4,449.0" fill="url(#g17)"/>
<polygon points="387.0,596.2 343.5,639.9 354.5,650.1 395.0,603.8" fill="url(#g18)"/>
<polygon points="355.6,641.4 435.9,784.7 420.1,793.3 342.4,648.6" fill="url(#g19)"/>
<circle cx="264.0" cy="445.0" r="4.0" fill="#f09010"/>
<circle cx="391.0" cy="600.0" r="5.0" fill="#f09010"/>
<circle cx="349.0" cy="645.0" r="6.8" fill="#f09010"/>
<polygon points="256.0,449.6 261.0,489.6 255.0,490.4 250.0,450.4" fill="url(#g20)"/>
<polygon points="256.8,487.3 220.8,503.2 223.2,508.8 259.2,492.7" fill="url(#g21)"/>
<polygon points="220.8,503.2 210.9,507.2 213.1,512.8 223.2,508.8" fill="url(#g22)"/>
<circle cx="258.0" cy="490.0" r="2.7" fill="#f09010"/>
<circle cx="222.0" cy="506.0" r="2.7" fill="#f09010"/>
<polygon points="255.1,563.3 250.4,582.1 255.6,585.9 260.9,564.7" fill="url(#g23)"/>
<polygon points="250.4,582.1 219.7,600.3 222.3,605.7 255.6,585.9" fill="url(#g24)"/>
<polygon points="219.7,600.3 211.1,603.2 212.9,608.8 222.3,605.7" fill="url(#g25)"/>
<circle cx="253.0" cy="584.0" r="2.7" fill="#f09010"/>
<circle cx="221.0" cy="603.0" r="2.7" fill="#f09010"/>
<g transform="translate(254,452) scale(1.0)"><path d="M-9,-5 L-1,-1 L-1,1 L-9,5Z M9,-5 L1,-1 L1,1 L9,5Z" fill="#a8e0f8"/><rect x="-9" y="-5" width="5" height="10" fill="#c8ecfa"/><rect x="4" y="-5" width="5" height="10" fill="#8cd4f4"/><path d="M-4,6 L3,-6" stroke="#a8a8a8" stroke-width="3"/></g>
<polygon points="215.9,594.9 379.7,801.3 370.3,808.7 208.1,601.1" fill="url(#g26)"/>
<polygon points="369.9,801.8 344.9,840.8 355.1,847.2 380.1,808.2" fill="url(#g27)"/>
<circle cx="375.0" cy="805.0" r="5.4" fill="#f09010"/>
<polygon points="166.3,396.9 143.7,408.6 144.3,417.4 169.7,403.1" fill="url(#g28)"/>
<polygon points="143.7,408.6 169.4,418.3 166.6,425.7 144.3,417.4" fill="url(#g29)"/>
<circle cx="144.0" cy="413.0" r="3.6" fill="#f09010"/>
<polygon points="166.9,515.2 146.6,523.0 145.4,531.1 169.1,520.8" fill="url(#g30)"/>
<polygon points="146.6,523.0 170.2,542.3 165.8,547.7 145.4,531.1" fill="url(#g31)"/>
<circle cx="146.0" cy="527.0" r="3.1" fill="#ffc818"/>
<polygon points="166.0,625.7 145.0,643.4 145.0,652.7 170.0,630.3" fill="url(#g32)"/>
<polygon points="145.0,643.4 170.3,665.4 165.7,670.6 145.0,652.7" fill="url(#g33)"/>
<circle cx="145.0" cy="648.0" r="3.1" fill="#f09010"/>
<polygon points="38.3,435.1 48.9,461.6 45.1,468.4 33.7,436.9" fill="url(#g34)"/>
<polygon points="48.9,461.6 66.4,458.1 67.6,463.9 45.1,468.4" fill="url(#g35)"/>
<polygon points="70.0,460.7 77.0,529.7 71.0,530.3 64.0,461.3" fill="url(#g36)"/>
<polygon points="73.2,527.1 35.2,538.1 36.8,543.9 74.8,532.9" fill="url(#g37)"/>
<circle cx="47.0" cy="465.0" r="2.7" fill="#f09010"/>
<circle cx="67.0" cy="461.0" r="2.7" fill="#f09010"/>
<circle cx="74.0" cy="530.0" r="2.7" fill="#f09010"/>
<polygon points="35.3,470.1 67.3,459.1 68.7,462.9 36.7,473.9" fill="url(#g38)"/>
<g transform="translate(51,477) scale(0.8)"><path d="M-9,-5 L-1,-1 L-1,1 L-9,5Z M9,-5 L1,-1 L1,1 L9,5Z" fill="#a8e0f8"/><rect x="-9" y="-5" width="5" height="10" fill="#c8ecfa"/><rect x="4" y="-5" width="5" height="10" fill="#8cd4f4"/><path d="M-4,6 L3,-6" stroke="#a8a8a8" stroke-width="3"/></g>
<polygon points="183.5,722.4 244.7,685.9 249.3,690.1 186.5,727.6" fill="url(#g39)"/>
<polygon points="244.7,685.9 272.3,631.6 277.7,634.4 249.3,690.1" fill="url(#g40)"/>
<circle cx="247.0" cy="688.0" r="2.7" fill="#ffc818"/>
<polygon points="183.4,820.4 239.0,786.7 243.0,791.3 186.6,825.6" fill="url(#g41)"/>
<polygon points="239.0,786.7 277.3,741.6 282.7,744.4 243.0,791.3" fill="url(#g42)"/>
<polygon points="277.3,741.6 283.1,721.2 288.9,722.8 282.7,744.4" fill="url(#g43)"/>
<circle cx="241.0" cy="789.0" r="2.7" fill="#ffc818"/>
<circle cx="280.0" cy="743.0" r="2.7" fill="#ffc818"/>
<g transform="translate(276,633) scale(1.0)"><path d="M-9,-5 L-1,-1 L-1,1 L-9,5Z M9,-5 L1,-1 L1,1 L9,5Z" fill="#a8e0f8"/><rect x="-9" y="-5" width="5" height="10" fill="#c8ecfa"/><rect x="4" y="-5" width="5" height="10" fill="#8cd4f4"/><path d="M-4,6 L3,-6" stroke="#a8a8a8" stroke-width="3"/></g>
<g transform="translate(288,721) scale(1.0)"><path d="M-9,-5 L-1,-1 L-1,1 L-9,5Z M9,-5 L1,-1 L1,1 L9,5Z" fill="#a8e0f8"/><rect x="-9" y="-5" width="5" height="10" fill="#c8ecfa"/><rect x="4" y="-5" width="5" height="10" fill="#8cd4f4"/><path d="M-4,6 L3,-6" stroke="#a8a8a8" stroke-width="3"/></g>
<polygon points="283.0,319.0 292.0,316.0 290.0,324.0" fill="url(#c44)"/>
<polygon points="338.0,340.0 348.0,336.0 346.0,345.0" fill="url(#c45)"/>
<polygon points="353.0,385.0 372.0,380.0 366.0,391.0" fill="url(#c46)"/>
<polygon points="370.0,384.0 374.0,396.0 364.0,392.0" fill="url(#c47)"/>
<polygon points="426.0,436.0 448.0,437.0 434.0,443.0" fill="url(#c48)"/>
<polygon points="424.0,440.0 432.0,457.0 430.0,446.0" fill="url(#c49)"/>
<polygon points="340.0,546.0 352.0,541.0 350.0,552.0" fill="url(#c50)"/>
<polygon points="362.0,617.0 377.0,610.0 375.0,621.0" fill="url(#c51)"/>
<polygon points="370.0,632.0 380.0,618.0 378.0,636.0" fill="url(#c52)"/>
<polygon points="370.0,690.0 390.0,685.0 378.0,696.0" fill="url(#c53)"/>
<polygon points="365.0,802.0 375.0,790.0 382.0,806.0" fill="url(#c54)"/>
<polygon points="395.0,790.0 418.0,774.0 430.0,788.0" fill="url(#c55)"/>
<polygon points="412.0,812.0 430.0,790.0 433.0,808.0" fill="url(#c56)"/>
<polygon points="420.9,780.6 346.7,840.0 363.3,860.0 435.1,797.4" fill="url(#g57)"/>
<polygon points="50.9,633.2 108.2,691.9 101.8,698.1 45.1,638.8" fill="url(#g58)"/>
<polygon points="163.5,661.1 296.0,820.1 286.8,824.7 156.5,666.9" fill="url(#g59)"/>
<polygon points="296.0,820.1 302.6,848.9 292.8,851.1 286.8,824.7" fill="url(#g60)"/>
<circle cx="291.4" cy="822.4" r="4.5" fill="#e81040"/>
<polygon points="30.0,621.9 464.7,458.3 471.3,475.2 42.0,652.5" fill="url(#g61)"/>
<polygon points="469.7,456.1 845.0,517.2 841.0,540.8 466.3,476.9" fill="url(#g62)"/>
<polygon points="733.0,516.0 763.0,511.0 763.0,532.0" fill="url(#c63)"/>
<polygon points="739.0,500.5 773.0,502.0 763.0,507.0" fill="url(#c64)"/>
<polygon points="852.4,514.0 949.9,460.8 960.1,479.2 863.6,534.0" fill="url(#g65)"/>
<polygon points="1024.3,437.0 1117.9,431.0 1118.0,452.0 1025.7,458.0" fill="url(#g66)"/>
<polygon points="1117.9,431.0 1459.8,448.5 1458.2,474.5 1118.0,452.0" fill="url(#g67)"/>
<polygon points="896.0,490.5 908.0,476.5 925.0,482.0" fill="url(#c68)"/>
<polygon points="906.5,505.4 927.0,484.0 928.0,502.6" fill="url(#c69)"/>
<polygon points="1080.0,431.7 1093.0,428.0 1126.6,429.0" fill="url(#c70)"/>
<polygon points="1082.0,446.6 1113.6,437.3 1113.6,455.0" fill="url(#c71)"/>
<circle cx="855" cy="530" r="13" fill="#ff1a12"/>
<polygon points="861.5,515.4 1079.5,694.4 1060.5,717.6 842.5,538.6" fill="url(#g72)"/>
<path d="M905,607.6L1000,588.1" stroke="#6d9df2" stroke-width="1" shape-rendering="crispEdges"/>
<polygon points="1062.1,696.1 1408.5,741.8 1409.6,776.2 1057.9,727.9" fill="url(#g73)"/>
<polygon points="1408.5,741.8 1596.9,705.3 1603.1,735.7 1409.6,776.2" fill="url(#g74)"/>
<polygon points="1116.0,724.5 1069.7,699.4 1088.6,691.9" fill="url(#c75)"/>
<polygon points="1099.9,745.9 1066.0,704.4 1059.7,727.0" fill="url(#c76)"/>
<polygon points="1360.6,736.3 1301.6,722.5 1310.2,738.0" fill="url(#c77)"/>
<polygon points="1362.3,762.4 1312.0,743.3 1305.0,771.0" fill="url(#c78)"/>
<polygon points="798.6,840.2 904.3,779.6 909.7,798.4 807.4,855.8" fill="url(#g79)"/>
<polygon points="904.3,779.6 1027.5,773.4 1024.3,793.6 909.7,798.4" fill="url(#g80)"/>
<polygon points="1027.5,773.4 1204.2,837.8 1195.8,860.2 1024.3,793.6" fill="url(#g81)"/>
<polygon points="952.8,777.3 980.8,771.1 980.8,782.0" fill="url(#c82)"/>
<polygon points="954.3,794.4 982.3,785.0 983.9,799.0" fill="url(#c83)"/>
<polygon points="1047.6,778.9 1080.3,782.0 1074.0,791.3" fill="url(#c84)"/>
<polygon points="1044.5,796.0 1071.0,792.9 1072.5,810.0" fill="url(#c85)"/>
<polygon points="812.9,830.2 837.7,802.2 850.2,813.0" fill="url(#c86)"/>
<polygon points="822.0,842.6 847.0,814.6 851.7,830.2" fill="url(#c87)"/>
<polygon points="432.7,780.4 636.0,839.1 628.0,864.9 427.3,797.6" fill="url(#g88)"/>
<path d="M565.4,815L574.8,846" stroke="#6d9df2" stroke-width="1" fill="none" shape-rendering="crispEdges"/>
<polygon points="460.0,790.2 488.7,791.7 476.6,797.8" fill="url(#c89)"/>
<polygon points="454.0,805.3 476.6,800.8 476.6,819.0" fill="url(#c90)"/>
<polygon points="36,665 70,674.5 95,690 89.4,719 36,705.7" fill="#12f012"/>
<path d="M169.5,650 L209.6,650 L209.6,668.6 Q209,678 199,680.4 L154.7,696 L120,700 L128,672 L139.9,668.6 L169.5,656.7Z" fill="url(#elb)"/>
<polygon points="168.5,122 219.5,122 209.6,668 169.5,668" fill="url(#rv)"/>
<path d="M196,668 L209.6,668 Q209,678 199,680.4 L190,683Z" fill="#a00808" opacity="0.6"/>
<polygon points="211.6,562 218,558 218,586" fill="#0a7a0a"/>
<polygon points="170.0,577.9 157.7,527.0 183.9,539.4" fill="url(#c91)"/>
<polygon points="203.9,577.9 220.8,528.0 188.5,539.4" fill="url(#c92)"/>
<path d="M84,700 Q82,692 95,690 L139.9,693.8 L175.5,702.7 Q184.4,708 184.4,716 L184.4,844 L139.9,844 L139.9,735.3 L92.4,732.4 Q82,722 84,700Z" fill="#ff1010"/>
<rect x="139.9" y="712" width="44.5" height="132" fill="url(#rv2)"/>
<path d="M148,716 Q165,700 184,712" fill="none" stroke="#d80c0c" stroke-width="2" opacity="0.6"/>
<polygon points="98.3,682.0 49.4,686.4 85.0,670.0" fill="url(#c93)"/>
<polygon points="86.4,716.0 46.4,690.0 53.8,720.5" fill="url(#c94)"/>
<polygon points="82.0,693.8 126.5,666.4 146.5,673.8" fill="url(#c95)"/>
<polygon points="144.3,699.0 86.4,697.5 126.5,681.2" fill="url(#c96)"/>
<polygon points="128.0,728.7 86.4,701.2 93.9,732.4" fill="url(#c97)"/>
<polygon points="135.4,686.4 150.2,676.0 154.7,696.8" fill="url(#c98)"/>
<polygon points="183.1,722.9 234.7,691.9 237.3,696.1 185.7,727.1" fill="url(#g99)"/>
<polygon points="966.7,444.1 1028.7,435.6 1031.3,456.4 969.3,463.9" fill="url(#g100)"/>
<path d="M949,434 Q975,436 988,452 Q1001,436 1025,434 L1025,477 Q1001,475 988,460 Q975,475 949,477Z" fill="url(#vb)"/>
<circle cx="951" cy="472" r="7" fill="#ff1010"/>
<path d="M978.4,452L1036.9,478" stroke="#6d9df2" stroke-width="1" fill="none" shape-rendering="crispEdges"/>
<rect x="958" y="415" width="59" height="8" rx="2" fill="url(#vh)"/><rect x="983" y="423" width="8" height="26" fill="#909090"/>
<circle cx="988" cy="456.5" r="10" fill="url(#vball)"/>
</g>
</svg>
<div class="abs" style="left:1459px;top:123px;width:141px;height:398px;background:linear-gradient(#c4d4e6,#dce7f3 25%,#dfe9f5);border:1px solid #5a5a5a;border-radius:7px 7px 0 0;border-bottom:2px solid #222"></div>
<div class="abs" style="left:1487px;top:132px;font-size:15px;color:#1a1a1a">Display</div>
<div class="abs" style="left:1558px;top:132px;width:32px;height:17px;border:1px solid #7a8a9a;border-radius:3px;background:linear-gradient(#e6eef8,#c8d6e6)"></div>
<svg class="abs" style="left:1567px;top:135px" width="14" height="11"><path d="M2,1.5L12,9.5M12,1.5L2,9.5" stroke="#f8f8f8" stroke-width="3.4"/><path d="M2,1.5L12,9.5M12,1.5L2,9.5" stroke="#404040" stroke-width="1.4"/></svg>
<div class="abs" style="left:1466px;top:153px;width:126px;height:361px;background:#f0f0f0;border:1px solid #e0e8f0"></div>
<svg class="abs" style="left:1459px;top:123px" width="141" height="398">
<g transform="translate(-1459,-123)">
<rect x="1473.5" y="160.5" width="111" height="4" fill="#e4e4e4" stroke="#d4d4d4"/>
<path d="M1541.5,154.5h9v10l-4.5,4l-4.5,-4z" fill="#f2f2f2" stroke="#999"/>
<rect x="1466.5" y="176.5" width="27" height="30" fill="#fbfbfb" stroke="#c8c8c8"/>
<rect x="1494.5" y="179.5" width="23" height="27" fill="#ececec" stroke="#c8c8c8"/>
<rect x="1517.5" y="179.5" width="23" height="27" fill="#ececec" stroke="#c8c8c8"/>
<rect x="1541.5" y="179.5" width="23" height="27" fill="#ececec" stroke="#c8c8c8"/>
<rect x="1564.5" y="179.5" width="22" height="27" fill="#ececec" stroke="#c8c8c8"/>
<rect x="1471.5" y="181.5" width="19" height="19" fill="#f4f4f4" stroke="#666"/>
<g><rect x="1473" y="183" width="4" height="4" fill="#20b020"/><rect x="1478" y="183" width="4" height="4" fill="#1830e0"/><rect x="1483" y="183" width="4" height="4" fill="#3030a0"/>
<rect x="1473" y="188" width="4" height="4" fill="#a02020"/><rect x="1478" y="188" width="4" height="4" fill="#e01010"/><rect x="1483" y="188" width="4" height="4" fill="#e03010"/>
<rect x="1473" y="193" width="4" height="4" fill="#f0b000"/><rect x="1478" y="193" width="4" height="4" fill="#909090"/><rect x="1483" y="193" width="4" height="4" fill="#505050"/></g>
<path d="M1495,187l4,3l-4,3z" fill="#b0b0b0"/>
<rect x="1504" y="183" width="10" height="4" fill="#4a9af0"/><rect x="1504" y="189" width="10" height="4" fill="#f0a020"/><rect x="1504" y="196" width="10" height="4" fill="#d02010"/>
<path d="M1529,182l9,5v10l-9,5l-9,-5v-10z" fill="#e03030"/><path d="M1529,192l9,-5v10l-9,5z" fill="#8030c0"/><path d="M1529,192l-9,-5v10l9,5z" fill="#20a040"/><path d="M1529,187l5,3l-5,3l-5,-3z" fill="#f8c000"/>
<g fill="#fff" stroke="#2a60d8" stroke-width="0.8"><rect x="1545" y="183" width="12" height="10"/><rect x="1549" y="189" width="12" height="12"/><rect x="1568" y="183" width="12" height="10"/><rect x="1572" y="189" width="12" height="12"/></g>
<g fill="#3a80f0"><rect x="1549" y="189" width="12" height="3"/><rect x="1572" y="189" width="12" height="3"/><rect x="1545" y="183" width="12" height="3"/><rect x="1568" y="183" width="12" height="3"/></g>
<rect x="1466.5" y="206.5" width="120" height="307" fill="none" stroke="#d0d0d0"/>
<g fill="#fff" stroke="#555" stroke-width="1.2">
<rect x="1471.6" y="211.6" width="80" height="17.8"/><rect x="1471.6" y="230.6" width="80" height="17.8"/><rect x="1471.6" y="249.6" width="80" height="17.8"/>
<rect x="1471.6" y="268.6" width="80" height="17.8"/><rect x="1471.6" y="287.6" width="80" height="17.8"/><rect x="1471.6" y="306.6" width="80" height="17.8"/></g>
<g font-family="Liberation Sans" font-size="10" fill="#111" text-anchor="end">
<text x="1550" y="224">24.84</text><text x="1550" y="243">3.24</text><text x="1550" y="262">0.83</text><text x="1550" y="281">0.00</text><text x="1550" y="300">0.00</text><text x="1550" y="319">0.00</text></g>
<rect x="1575" y="218" width="4" height="103" fill="#e8e8e8" stroke="#d0d0d0"/>
<path d="M1567.5,217.5l4,-4h11v8h-11z" fill="#f0f0f0" stroke="#999"/>
<path d="M1567.5,321.5l4,-4h11v8h-11z" fill="#f0f0f0" stroke="#999"/>
<g stroke="#999"><line x1="1559" y1="218.5" x2="1562" y2="218.5"/><line x1="1559" y1="226.5" x2="1562" y2="226.5"/><line x1="1559" y1="234.5" x2="1562" y2="234.5"/><line x1="1559" y1="242.5" x2="1562" y2="242.5"/><line x1="1559" y1="250.5" x2="1562" y2="250.5"/><line x1="1559" y1="258.5" x2="1562" y2="258.5"/><line x1="1559" y1="266.5" x2="1562" y2="266.5"/><line x1="1559" y1="274.5" x2="1562" y2="274.5"/><line x1="1559" y1="282.5" x2="1562" y2="282.5"/><line x1="1559" y1="290.5" x2="1562" y2="290.5"/><line x1="1559" y1="298.5" x2="1562" y2="298.5"/><line x1="1559" y1="306.5" x2="1562" y2="306.5"/><line x1="1559" y1="314.5" x2="1562" y2="314.5"/><line x1="1559" y1="321.5" x2="1562" y2="321.5"/></g>
<rect x="1471.5" y="329.5" width="80" height="19" fill="#e8e8e8" stroke="#3399ff"/>
<text x="1511" y="343" font-family="Liberation Sans" font-size="11" fill="#111" text-anchor="middle">Reset</text>
<rect x="1567.5" y="333.5" width="12" height="12" fill="#fff" stroke="#333"/>
<rect x="1475" y="356" width="25" height="16" fill="#ff9af8"/>
<rect x="1475" y="372" width="25" height="16" fill="#e000e0"/>
<rect x="1475" y="388" width="25" height="16" fill="#ff0000"/>
<rect x="1475" y="404" width="25" height="16" fill="#ffff00"/>
<rect x="1475" y="420" width="25" height="16" fill="#00ff00"/>
<rect x="1475" y="436" width="25" height="16" fill="#00ffff"/>
<rect x="1475" y="452" width="25" height="16" fill="#00007a"/>
<rect x="1475" y="468" width="25" height="17" fill="#000038"/>
<g fill="#f0f0f0" stroke="#555" stroke-width="1.2">
<rect x="1500.6" y="356.6" width="81" height="15.4"/><rect x="1500.6" y="372.6" width="81" height="15.4"/><rect x="1500.6" y="388.6" width="81" height="15.4"/><rect x="1500.6" y="404.6" width="81" height="15.4"/>
<rect x="1500.6" y="420.6" width="81" height="15.4"/><rect x="1500.6" y="436.6" width="81" height="15.4"/><rect x="1500.6" y="452.6" width="81" height="15.4"/><rect x="1500.6" y="468.6" width="81" height="16"/></g>
<g font-family="Liberation Sans" font-size="10" fill="#2a6ed0" text-anchor="end">
<text x="1579" y="368">&gt; 24.84</text><text x="1579" y="384">24.84</text><text x="1579" y="400">3.24</text><text x="1579" y="416">0.83</text><text x="1579" y="432">0.00</text><text x="1579" y="448">0.00</text><text x="1579" y="464">0.00</text><text x="1579" y="481">&lt; 0.00</text></g>
<text x="1579" y="498" font-family="Liberation Sans" font-size="8" fill="#111" text-anchor="end">l/s</text>
</g>
</svg>
<div class="abs" style="left:1600px;top:0px;width:8px;height:876px;background:#f4f6f8"></div>
<svg class="abs" style="left:1601px;top:0px" width="7" height="268"><g fill="#cfe0f6" stroke="#5a9ae8"><rect x="1.5" y="0.5" width="8" height="20"/><rect x="1.5" y="22.5" width="8" height="20"/><rect x="1.5" y="44.5" width="8" height="20"/><rect x="1.5" y="66.5" width="8" height="20"/><rect x="1.5" y="88.5" width="8" height="20"/><rect x="1.5" y="110.5" width="8" height="20"/><rect x="1.5" y="148.5" width="8" height="18"/><rect x="1.5" y="170.5" width="8" height="20"/><rect x="1.5" y="192.5" width="8" height="20"/><rect x="1.5" y="214.5" width="8" height="20"/><rect x="1.5" y="236.5" width="8" height="20"/></g></svg>

<div class="abs" id="status"></div>
<svg class="abs" style="left:0;top:115px" width="36" height="729">
<defs>
<linearGradient id="lcube" x1="0" y1="0" x2="0" y2="1"><stop offset="0" stop-color="#ffe08a"/><stop offset="1" stop-color="#c88a10"/></linearGradient>
<radialGradient id="linfo" cx="0.4" cy="0.35" r="0.7"><stop offset="0" stop-color="#ffc060"/><stop offset="1" stop-color="#e07000"/></radialGradient>
</defs>
<g transform="translate(0,-115)">
<rect x="6.5" y="117.5" width="24" height="47" fill="#c4def6" stroke="#3399ff"/>
<line x1="6" y1="141" x2="31" y2="141" stroke="#3399ff"/>
<path d="M18.5,121l9,4.5v10l-9,4.5l-9,-4.5v-10z" fill="url(#lcube)" stroke="#b07810" stroke-width="0.6"/>
<rect x="10" y="145" width="17" height="16" fill="#fff" stroke="#2030a0" stroke-width="1"/>
<rect x="10" y="145" width="17" height="3.5" fill="#2030a0"/>
<path d="M10,153h17M10,157.5h17M15.5,145v16M21.5,145v16" stroke="#2030a0" stroke-width="0.8"/>
<polygon points="27.3,178.5 22.9,180.1 23.0,184.8 18.7,182.9 15.5,186.3 13.9,181.9 9.2,182.0 11.1,177.7 7.7,174.5 12.1,172.9 12.0,168.2 16.3,170.1 19.5,166.7 21.1,171.1 25.8,171.0 23.9,175.3" fill="#707070" stroke="#303030" stroke-width="0.6"/><circle cx="17.5" cy="176.5" r="6.5" fill="#8ad0f0"/><circle cx="16" cy="174.5" r="2.5" fill="#d8f4ff"/>
<rect x="6.5" y="189.5" width="24" height="47" fill="#c4def6" stroke="#3399ff"/>
<line x1="6" y1="213" x2="31" y2="213" stroke="#3399ff"/>
<path d="M13,193l11,9l-5,1l3,6l-2,1l-3,-6l-4,3z" fill="#d02a10"/>
<rect x="9" y="219" width="18" height="15" fill="#3aa0e0" stroke="#404040" stroke-width="0.8"/>
<path d="M9,234l6,-6l5,3l7,-4v7z" fill="#30a030"/>
<circle cx="25" cy="219" r="4" fill="#ff9a00"/>
<line x1="2" y1="239.5" x2="33" y2="239.5" stroke="#a0a0a0"/>
<rect x="0.5" y="245.5" width="35" height="23" fill="#dcdcdc" stroke="#3399ff"/>
<circle cx="11.5" cy="256.5" r="8" fill="url(#linfo)"/>
<rect x="10.5" y="255" width="2.4" height="6" fill="#fff"/><circle cx="11.7" cy="252" r="1.3" fill="#fff"/>
<path d="M27,255h6l-3,3.5z" fill="#111"/>
<path d="M14,282l5,-10" stroke="#8a5a20" stroke-width="2"/><path d="M8,289 q1,-8 6,-8 q4,1 3,5 q-3,3 -9,3z" fill="#d8c040" stroke="#907020" stroke-width="0.6"/>
<path d="M27,280h6l-3,3.5z" fill="#111"/>
<text x="4" y="302" font-family="Liberation Sans" font-size="7" fill="#222">ABC</text>
<path d="M7,306l4,5l10,-11" fill="none" stroke="#2040c0" stroke-width="2.4"/>
<path d="M27,304h6l-3,3.5z" fill="#111"/>
<line x1="2" y1="319.5" x2="33" y2="319.5" stroke="#a0a0a0"/>
<circle cx="9" cy="334" r="7.5" fill="#7ed0f4"/><circle cx="16" cy="334" r="7.5" fill="#e4ec90" opacity="0.85"/>
<path d="M27,333h6l-3,3.5z" fill="#111"/>
<line x1="2" y1="348.5" x2="33" y2="348.5" stroke="#a0a0a0"/>
<path d="M15,360v12l-7,-6z M21,360v12l7,-6z" fill="#1a78d0"/>
<rect x="9.5" y="383.5" width="16" height="14" rx="4" fill="#e8f4f8" stroke="#2a6a90" stroke-width="1.5"/>
<rect x="13" y="389" width="9" height="3" fill="#2a6a90"/>
<rect x="0" y="409" width="36" height="435" fill="#f3f3f3"/>
<text x="4" y="427" font-family="Liberation Sans" font-size="12" fill="#111">x22.1</text>
<rect x="12" y="441" width="4" height="394" fill="#e8e8e8" stroke="#d0d0d0" stroke-width="1"/>
<path d="M7.5,612.5h12l4,5l-4,5h-12z" fill="#f0f0f0" stroke="#909090"/>
<g stroke="#b0b0b0"><line x1="25" y1="446" x2="28" y2="446"/><line x1="25" y1="525" x2="28" y2="525"/><line x1="25" y1="605" x2="28" y2="605"/><line x1="25" y1="685" x2="28" y2="685"/><line x1="25" y1="765" x2="28" y2="765"/><line x1="25" y1="829" x2="28" y2="829"/></g>
</g>
</svg>
<svg class="abs" style="left:0;top:844px" width="700" height="24">
<defs><linearGradient id="sbtn" x1="0" y1="0" x2="0" y2="1"><stop offset="0" stop-color="#f4f4f4"/><stop offset="1" stop-color="#d8d8d8"/></linearGradient></defs>
<g transform="translate(0,-844)">
<rect x="0" y="844" width="680" height="24" fill="#f0f0f0"/>
<rect x="1.5" y="847.5" width="17" height="17" fill="url(#sbtn)" stroke="#a8a8a8"/>
<rect x="20.5" y="847.5" width="18" height="17" fill="#c8c8c8" stroke="#707070"/>
<rect x="40.5" y="847.5" width="18" height="17" fill="url(#sbtn)" stroke="#a8a8a8"/>
<rect x="60.5" y="847.5" width="18" height="17" fill="url(#sbtn)" stroke="#a8a8a8"/>
<rect x="80.5" y="847.5" width="18" height="17" fill="url(#sbtn)" stroke="#a8a8a8"/>
<g fill="none" stroke="#2a6ed0" stroke-width="1.2">
<circle cx="10" cy="856" r="6"/><circle cx="29.5" cy="856" r="6"/><circle cx="49.5" cy="856" r="6"/><circle cx="69.5" cy="856" r="6"/><circle cx="89.5" cy="856" r="6"/></g>
<g fill="#2a6ed0"><path d="M8,853l5,3l-5,3z"/><path d="M25,853l4,3l-4,3zM29,853l4,3l-4,3z"/><rect x="47" y="853" width="1.8" height="6"/><rect x="50.5" y="853" width="1.8" height="6"/><path d="M65,853l4,3l-4,3zM69,853l4,3l-4,3z"/><path d="M87.5,853l5,3l-5,3z"/></g>
<rect x="101.5" y="846.5" width="248" height="19" fill="#fff" stroke="#8a8a8a"/>
<rect x="352.5" y="846.5" width="124" height="19" fill="#90ee90" stroke="#b0b0b0"/>
<rect x="479.5" y="846.5" width="34" height="19" fill="#e8e8e8" stroke="#a8a8a8"/>
<rect x="515.5" y="846.5" width="157" height="19" fill="#ececec" stroke="#a8a8a8"/>
</g>
</svg>
<div class="sb" style="left:100px;top:848px;font-size:12px">Coords 304478.0 E    6879692.0 N   2243 Z</div>
<div class="sb" style="left:354px;top:848px;font-size:12px;color:#111;-webkit-text-stroke:0.2px #111">Simulation successful</div>
<div class="sb" style="left:480px;top:848px;font-size:12px;font-weight:bold">Type</div>
<div class="sb" style="left:516px;top:848px;font-size:11.4px;-webkit-text-stroke:0.2px #000">Pipes 505  Sim Iterations 126</div>
<div class="abs" style="left:0;top:8px;width:18px;height:23px"><svg width="18" height="23"><circle cx="10" cy="11.5" r="6" fill="#2a8ad8"/><circle cx="10" cy="11.5" r="2.5" fill="#f0c869"/><path d="M4,8q3,-5 9,-4M16,15q-3,5 -9,4" stroke="#2a8ad8" stroke-width="2" fill="none"/></svg></div>

<div class="abs" id="task"></div>
<svg class="abs" style="left:0;top:868px" width="1608" height="8"><g fill="#c9a468" stroke="#9a7038" stroke-width="1"><rect x="113.5" y="1.5" width="58" height="10"/><rect x="175.5" y="1.5" width="58" height="10"/><rect x="237.5" y="1.5" width="58" height="10"/><rect x="299.5" y="1.5" width="58" height="10"/><rect x="361.5" y="1.5" width="58" height="10" fill="#d8c8a8"/><rect x="423.5" y="1.5" width="58" height="10"/><rect x="485.5" y="1.5" width="58" height="10"/><rect x="590.5" y="1.5" width="58" height="10"/></g>
<path d="M75,10 q10,-9 20,-2" stroke="#f0d000" stroke-width="3" fill="none"/><rect x="200" y="5" width="14" height="5" fill="#e03030"/><rect x="250" y="4" width="14" height="6" fill="#2a70d0"/><rect x="436" y="3" width="3" height="7" fill="#2050a0"/><rect x="446" y="3" width="12" height="7" fill="#f05010"/><rect x="500" y="4" width="30" height="6" fill="#5a90e0"/><rect x="620" y="3" width="6" height="7" fill="#f0e000"/>
<rect x="1600" y="0" width="8" height="10" fill="#f4f4f4"/></svg>
<svg class="abs" style="left:0;top:0" width="1608" height="122">
<defs>
<linearGradient id="ib" x1="0" y1="0" x2="0" y2="1"><stop offset="0" stop-color="#7fc0f8"/><stop offset="1" stop-color="#1a70d0"/></linearGradient>
<radialGradient id="iball" cx="0.35" cy="0.3" r="0.8"><stop offset="0" stop-color="#9ad0ff"/><stop offset="0.6" stop-color="#2a7ee0"/><stop offset="1" stop-color="#0a40a0"/></radialGradient>
<radialGradient id="iglobe" cx="0.35" cy="0.3" r="0.8"><stop offset="0" stop-color="#8ac8ff"/><stop offset="0.6" stop-color="#1a5cc0"/><stop offset="1" stop-color="#062a70"/></radialGradient>
<linearGradient id="iy" x1="0" y1="0" x2="0" y2="1"><stop offset="0" stop-color="#ffe070"/><stop offset="1" stop-color="#e09000"/></linearGradient>
<linearGradient id="itank" x1="0" y1="0" x2="0" y2="1"><stop offset="0" stop-color="#d8eef8"/><stop offset="1" stop-color="#3aa0d8"/></linearGradient>
</defs>
<!-- grips -->
<path d="M5,58v26" stroke="#a0a0a0" stroke-width="2" stroke-dasharray="2,2"/>
<!-- new -->
<path d="M15,61h10l5,5v15h-15z" fill="#fff" stroke="#3a7ad8" stroke-width="1"/>
<circle cx="16" cy="64" r="4" fill="#ff9a20"/>
<!-- open -->
<path d="M36,68h7l2,2h9l-3,11h-15z" fill="url(#iy)" stroke="#b07000" stroke-width="0.8"/>
<path d="M42,73 q0,-8 7,-10 l-1,-3 l5,4 l-4,4 l0,-3 q-5,1 -7,8z" fill="#20b020"/>
<!-- save -->
<rect x="60" y="62" width="19" height="19" rx="1.5" fill="#5a6ad8"/>
<rect x="63" y="63" width="13" height="9" fill="#e8f0ff"/>
<rect x="66" y="75" width="7" height="6" fill="#9aa0b0"/>
<line x1="83.5" y1="57" x2="83.5" y2="85" stroke="#888" stroke-width="1"/>
<!-- undo redo -->
<path d="M93.5,72 A5.8,5.8 0 1 0 99.5,66" fill="none" stroke="#1a7ad8" stroke-width="3.6"/>
<path d="M93.2,65.5L100.2,61.6L100.2,69.6z" fill="#1a7ad8"/>
<path d="M128.5,72 A5.8,5.8 0 1 1 122.5,66" fill="none" stroke="#1a7ad8" stroke-width="3.6"/>
<path d="M128.8,65.5L121.8,61.6L121.8,69.6z" fill="#1a7ad8"/>
<line x1="137.5" y1="57" x2="137.5" y2="85" stroke="#888" stroke-width="1"/>
<!-- green box -->
<rect x="145" y="63" width="17" height="17" rx="3" fill="#1a8a30"/>
<path d="M153.5,65v13M147,71.5h13M149,67l9,9M158,67l-9,9" stroke="#e8ffe8" stroke-width="1.6"/>
<!-- bulb -->
<circle cx="175" cy="68" r="6" fill="#ffe8a0" stroke="#c8a040" stroke-width="0.8"/>
<rect x="172" y="74" width="6" height="5" fill="#a0a8b8"/>
<circle cx="181" cy="78" r="4.5" fill="#30b030"/>
<path d="M181,75.5v5M178.5,78h5" stroke="#fff" stroke-width="1.4"/>
<!-- camera -->
<rect x="192" y="64" width="17" height="12" rx="1.5" fill="#808890" stroke="#404040" stroke-width="0.8"/>
<circle cx="201" cy="70" r="4" fill="#4a7ad0"/>
<circle cx="205" cy="78" r="4.5" fill="#30b030"/>
<path d="M205,75.5v5M202.5,78h5" stroke="#fff" stroke-width="1.4"/>
<!-- flashlight -->
<path d="M216,76 l14,-12 l4,5 l-13,12z" fill="#7ac820" stroke="#3a7a10" stroke-width="0.8"/>
<ellipse cx="219" cy="77" rx="4" ry="5" transform="rotate(-45 219 77)" fill="#e8ffe0" stroke="#3a7a10" stroke-width="0.8"/>
<path d="M240,69h7l-3.5,4z" fill="#111"/>
<!-- pressed group -->
<rect x="249.5" y="59.5" width="95" height="23" fill="#d6dde4" stroke="#3399ff"/>
<rect x="285" y="60" width="24" height="22" fill="#c4def6" stroke="#3399ff"/>
<rect x="309.5" y="59.5" width="35" height="23" fill="none" stroke="#3399ff"/>
<rect x="253" y="70" width="13" height="11" rx="1.5" fill="#e8a020"/>
<path d="M255,70v-4a4,4 0 0,1 8,0" fill="none" stroke="#909090" stroke-width="2"/>
<path d="M262,78l8,-9" stroke="#f08040" stroke-width="2.5"/>
<path d="M276,69h7l-3.5,4z" fill="#111"/>
<path d="M288,62l0,17l18,0z" fill="none" stroke="#2a7ed8" stroke-width="2"/>
<circle cx="321" cy="71" r="9.5" fill="url(#iball)"/>
<path d="M318,66l7,5l-7,5z" fill="#fff"/>
<path d="M335,69h7l-3.5,4z" fill="#111"/>
<line x1="469.5" y1="57" x2="469.5" y2="85" stroke="#888" stroke-width="1"/>
<!-- magnifier -->
<circle cx="494" cy="69" r="6.5" fill="#c8f0ff" stroke="#3a3a3a" stroke-width="1.8"/>
<path d="M489,74l-7,7" stroke="#404040" stroke-width="3"/>
<!-- pencil -->
<path d="M507,79l3,-7l12,-10l4,4l-12,10z" fill="#2a3a90" stroke="#101840" stroke-width="0.6"/>
<path d="M530,69h7l-3.5,4z" fill="#111"/>
<!-- wrench -->
<path d="M542,80l11,-11" stroke="#808080" stroke-width="4"/>
<circle cx="555" cy="66" r="4.5" fill="none" stroke="#808080" stroke-width="3"/>
<!-- info -->
<circle cx="575" cy="71" r="9.5" fill="url(#iball)"/>
<rect x="573.5" y="69" width="3" height="8" fill="#fff"/><circle cx="575" cy="65.5" r="1.6" fill="#fff"/>
<!-- star -->
<path d="M600,61l3,6.5l7,0.8l-5.2,4.7l1.5,7l-6.3,-3.6l-6.3,3.6l1.5,-7l-5.2,-4.7l7,-0.8z" fill="#f8a800" stroke="#d07800" stroke-width="0.6"/>
<path d="M614,69h7l-3.5,4z" fill="#111"/>
<!-- gear circle -->
<polygon points="645.3,73.1 640.8,74.9 640.8,79.8 636.3,77.9 632.9,81.3 631.1,76.8 626.2,76.8 628.1,72.3 624.7,68.9 629.2,67.1 629.2,62.2 633.7,64.1 637.1,60.7 638.9,65.2 643.8,65.2 641.9,69.7" fill="#707070" stroke="#303030" stroke-width="0.6"/><circle cx="635" cy="71" r="7" fill="#8ad0f0"/><circle cx="633.5" cy="69" r="2.5" fill="#d8f4ff"/>
<!-- red x -->
<path d="M652,63l14,15M666,63l-14,15" stroke="#d02020" stroke-width="4"/>
<path d="M674,69h7l-3.5,4z" fill="#111"/>
<!-- green arrow -->
<path d="M685,68h10v-5l9,8l-9,8v-5h-10z" fill="#8ad020" stroke="#5a9a10" stroke-width="0.6"/>
<path d="M710,69h7l-3.5,4z" fill="#111"/>
<!-- pressed double arrow -->
<rect x="719.5" y="59.5" width="24" height="23" fill="#c4def6" stroke="#3399ff"/>
<path d="M722,63l8,8l-8,8z M730,63l8,8l-8,8z" fill="#1a80e0" stroke="#0a50a0" stroke-width="0.8"/>
<!-- no sign -->
<circle cx="756" cy="71" r="7.5" fill="none" stroke="#e01010" stroke-width="3"/>
<path d="M751,76l10,-10" stroke="#e01010" stroke-width="3"/>
<!-- refresh -->
<path d="M772,71a7,7 0 0,1 12,-5M786,71a7,7 0 0,1 -12,5" fill="none" stroke="#20c020" stroke-width="3"/>
<line x1="794.5" y1="57" x2="794.5" y2="85" stroke="#888" stroke-width="1"/>
<!-- tank -->
<rect x="807" y="63" width="19" height="18" rx="3" fill="url(#itank)" stroke="#6aa8d0" stroke-width="0.6"/>
<ellipse cx="816.5" cy="65" rx="9.5" ry="2.5" fill="#b8b8b8"/>
<!-- pump -->
<circle cx="841" cy="72" r="7" fill="none" stroke="#5aa8d8" stroke-width="2.5"/>
<rect x="846" y="64" width="8" height="6" fill="#a0a0a0"/>
<!-- valve -->
<path d="M860,66q6,1 12,6q6,-5 11,-6v14q-5,-1 -11,-6q-6,5 -12,6z" fill="url(#itank)"/>
<rect x="861" y="62" width="21" height="2.5" fill="#909090"/><rect x="870.5" y="64" width="2.5" height="8" fill="#909090"/>
<!-- control valve -->
<path d="M888,68q6,1 11,5q5,-4 10,-5v12q-5,-1 -10,-5q-5,4 -11,5z" fill="url(#itank)"/>
<path d="M893,81l9,-14" stroke="#808080" stroke-width="3"/>
<!-- bend -->
<path d="M921.5,80 v-4 q0,-9.5 9.5,-9.5 h3" fill="none" stroke="#6ac0ea" stroke-width="6"/><rect x="915" y="80" width="13" height="2.5" fill="#808080"/><rect x="933" y="61" width="2.5" height="11" fill="#808080"/>
<!-- sprinkler -->
<path d="M951,62v8M944,74l5,-4M958,74l-5,-4M942,78l3,-2M960,78l-3,-2" stroke="#3aa8e0" stroke-width="2.2"/>
<line x1="965.5" y1="57" x2="965.5" y2="85" stroke="#444" stroke-width="1"/>
<!-- funnel -->
<path d="M972,64h18l-7,8v8h-4v-8z" fill="#888" stroke="#505050" stroke-width="0.8"/>
<path d="M984,80l7,-8" stroke="#f0b020" stroke-width="3"/>
<line x1="996.5" y1="57" x2="996.5" y2="85" stroke="#444" stroke-width="1"/>
<!-- globe -->
<circle cx="1019" cy="71" r="9.5" fill="url(#iglobe)"/>
<path d="M1015,67q4,-3 7,1q-4,5 -6,8" fill="none" stroke="#bfe0ff" stroke-width="1.4"/>

<!-- toolbar 2 -->
<path d="M11,97l5,0l-5,5zM26,97l-5,0l5,5zM11,112l5,0l-5,-5zM26,112l-5,0l5,-5z" fill="#2a7ed8"/>
<path d="M13,99l4,4M24,99l-4,4M13,110l4,-4M24,110l-4,-4" stroke="#2a7ed8" stroke-width="2"/>
<ellipse cx="47.5" cy="104.5" rx="9.5" ry="8.5" fill="#f0d890" stroke="#8a6a10" stroke-width="1.2"/>
<circle cx="44" cy="101" r="1.8" fill="#e02020"/><circle cx="49" cy="100" r="1.8" fill="#e020c0"/><circle cx="53" cy="104" r="1.8" fill="#20a020"/><circle cx="49.5" cy="108.5" r="1.8" fill="#2080e0"/><circle cx="43" cy="106" r="1.6" fill="#fff"/>
<line x1="325.5" y1="92" x2="325.5" y2="118" stroke="#888"/>
<g fill="none" stroke="#b0b0b0" stroke-width="2.5"><rect x="332" y="101" width="9" height="7" rx="3"/><rect x="339" y="101" width="9" height="7" rx="3"/></g>
<line x1="355.5" y1="92" x2="355.5" y2="118" stroke="#888"/>
<text x="362" y="111" font-family="Liberation Serif" font-weight="bold" font-size="16" fill="#111">T</text>
<line x1="643.5" y1="92" x2="643.5" y2="118" stroke="#888"/>
<path d="M653,100l7,-8l7,8z M653,109l7,8l7,-8z" fill="#2a7ed8"/>
<rect x="677.5" y="97.5" width="16" height="14" rx="4" fill="#e8f4f8" stroke="#2a6a90" stroke-width="1.5"/>
<rect x="681" y="103" width="9" height="3" fill="#2a6a90"/>
<rect x="698.5" y="91.5" width="22" height="27" fill="#c4def6" stroke="#3399ff"/>
<text x="700" y="111" font-family="Liberation Sans" font-style="italic" font-weight="bold" font-size="14" fill="#7ab8e8" stroke="#2a7ed8" stroke-width="0.6">AA</text>
<!-- slider -->
<rect x="753.5" y="98.5" width="607" height="3" fill="#e6e6e6" stroke="#c8c8c8"/>
<path d="M964.5,92.5h10v13l-5,5l-5,-5z" fill="#f4f4f4" stroke="#888"/>
<g stroke="#999"><line x1="758.5" y1="112" x2="758.5" y2="115"/><line x1="879.5" y1="112" x2="879.5" y2="115"/><line x1="999.5" y1="112" x2="999.5" y2="115"/><line x1="1120.5" y1="112" x2="1120.5" y2="115"/><line x1="1240.5" y1="112" x2="1240.5" y2="115"/><line x1="1355.5" y1="112" x2="1355.5" y2="115"/></g>
</svg>
<div class="combo" style="left:347px;top:60px;width:119px;height:21px;font-size:12px;padding-top:3px">Stage 1</div>
<div class="combo" style="left:61px;top:94px;width:105px;height:22px;font-size:11px;padding-top:4px">Flow</div>
<div class="combo" style="left:168px;top:94px;width:135px;height:22px;font-size:11px;padding-top:4px">Quantity</div>
<div class="abs" style="left:307px;top:99px;font-size:11px">l/s</div>
<div class="combo" style="left:379px;top:94px;width:105px;height:22px;font-size:11px;padding-top:4px">Flow</div>
<div class="combo" style="left:486px;top:94px;width:135px;height:22px;font-size:11px;padding-top:4px">Quantity</div>
<div class="abs" style="left:625px;top:99px;font-size:11px">l/s</div>

</body></html>
